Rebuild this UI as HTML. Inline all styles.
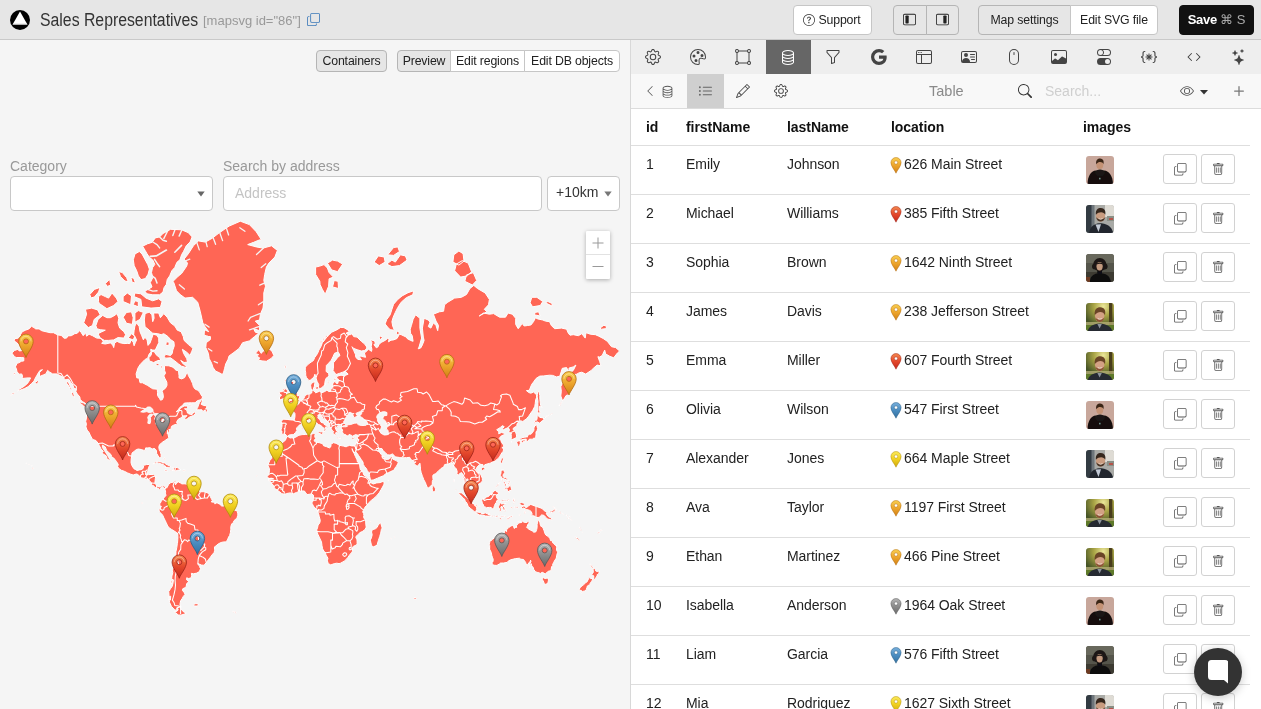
<!DOCTYPE html>
<html lang="en">
<head>
<meta charset="utf-8">
<title>Sales Representatives</title>
<style>
*{box-sizing:border-box;margin:0;padding:0}
html,body{width:1261px;height:709px;overflow:hidden;background:#fff}
body{font-family:"Liberation Sans",Arial,sans-serif;font-size:14px;color:#222;position:relative}
.abs{position:absolute}
#topbar{position:absolute;left:0;top:0;width:1261px;height:40px;background:#e6e6e6;border-bottom:1px solid #c9c9c9}
#title{position:absolute;left:40px;top:9.6px;font-size:18px;color:#333;white-space:nowrap;transform-origin:0 50%;transform:scaleX(0.878)}
#sc{position:absolute;left:203px;top:12.6px;font-size:13px;color:#999;white-space:nowrap}
.btn{position:absolute;border:1px solid #c6c6c6;background:#fff;border-radius:4px;font-size:12.3px;color:#222;text-align:center;white-space:nowrap;letter-spacing:-0.15px}
.btn.on{background:#e6e6e6;border-color:#b5b5b5}
#left{position:absolute;left:0;top:40px;width:631px;height:669px;background:#f5f5f5;border-right:1px solid #d8d8d8;overflow:hidden}
#right{position:absolute;left:631px;top:40px;width:630px;height:669px;background:#fff;overflow:hidden}
#tb1{position:absolute;left:0;top:0;width:630px;height:34px;background:#eeeeee}
#tb2{position:absolute;left:0;top:34px;width:630px;height:35px;background:#f8f8f8;border-bottom:1px solid #dcdcdc}
.ic{position:absolute;width:18px;height:18px}
.lbl{position:absolute;font-size:14px;color:#999;white-space:nowrap}
.inp{position:absolute;background:#fff;border:1px solid #c8c8c8;border-radius:4px;height:34px}
.row{position:absolute;left:0;width:619px;height:49px;border-top:1px solid #dedede;font-size:14px;color:#222;letter-spacing:-0.05px}
.row span{position:absolute;top:10px;white-space:nowrap}
.hd span{font-weight:bold;top:11px;color:#111}
.c1{left:15px}.c2{left:55px}.c3{left:156px}.c4{left:273px}
.pin{position:absolute;left:259px;top:11px;width:12px;height:17px}
.av{position:absolute;left:455px;top:10px;width:28px;height:28px;border-radius:3px;overflow:hidden}
.sq{position:absolute;top:8px;width:34px;height:30px;border:1px solid #d2d2d2;border-radius:3px;background:#fff}
.sq svg{position:absolute;left:10px;top:8px;width:12.5px;height:12.5px}
#topbar,#left,#right{will-change:transform}
</style>
</head>
<body>

<div id="topbar">
<svg class="abs" style="left:10px;top:9.8px;width:20px;height:20px" viewBox="0 0 20 20"><circle cx="10" cy="10" r="10" fill="#000"/><path d="M10 1.6 L17.4 14.5 L2.6 14.5 Z" fill="#fff"/><path d="M3.2 13.6 L16.8 13.6 L17.4 14.5 L2.6 14.5Z" fill="#ddd"/></svg>
<div id="title">Sales Representatives</div>
<div id="sc">[mapsvg id="86"]</div>
<svg class="abs" style="left:307px;top:13px;width:13px;height:13px;" viewBox="0 0 16 16" fill="#3a78b8"><path fill-rule="evenodd" d="M4 2a2 2 0 0 1 2-2h8a2 2 0 0 1 2 2v8a2 2 0 0 1-2 2H6a2 2 0 0 1-2-2zm2-1a1 1 0 0 0-1 1v8a1 1 0 0 0 1 1h8a1 1 0 0 0 1-1V2a1 1 0 0 0-1-1zM2 5a1 1 0 0 0-1 1v8a1 1 0 0 0 1 1h8a1 1 0 0 0 1-1v-1h1v1a2 2 0 0 1-2 2H2a2 2 0 0 1-2-2V6a2 2 0 0 1 2-2h1v1z"></path></svg>
<div class="btn" style="left:793px;top:5px;width:79px;height:30px;line-height:28px;padding-left:14px">Support</div>
<svg class="abs" style="left:803px;top:14px;width:12px;height:12px;" viewBox="0 0 16 16" fill="#333"><path d="M8 15A7 7 0 1 1 8 1a7 7 0 0 1 0 14m0 1A8 8 0 1 0 8 0a8 8 0 0 0 0 16"></path><path d="M5.255 5.786a.237.237 0 0 0 .241.247h.825c.138 0 .248-.113.266-.25.09-.656.54-1.134 1.342-1.134.686 0 1.314.343 1.314 1.168 0 .635-.374.927-.965 1.371-.673.489-1.206 1.06-1.168 1.987l.003.217a.25.25 0 0 0 .25.246h.811a.25.25 0 0 0 .25-.25v-.105c0-.718.273-.927 1.01-1.486.609-.463 1.244-.977 1.244-2.056 0-1.511-1.276-2.241-2.673-2.241-1.267 0-2.655.59-2.75 2.286m1.557 5.763c0 .533.425.927 1.01.927.609 0 1.028-.394 1.028-.927 0-.552-.42-.94-1.029-.94-.584 0-1.009.388-1.009.94"></path></svg>
<div class="btn on" style="left:893px;top:5px;width:34px;height:30px;border-radius:4px 0 0 4px"></div>
<div class="btn on" style="left:926px;top:5px;width:33px;height:30px;border-radius:0 4px 4px 0"></div>
<svg class="abs" style="left:902.5px;top:13px;width:13px;height:13px;" viewBox="0 0 16 16" fill="#222"><path d="M14 2a1 1 0 0 1 1 1v10a1 1 0 0 1-1 1H2a1 1 0 0 1-1-1V3a1 1 0 0 1 1-1zM2 1a2 2 0 0 0-2 2v10a2 2 0 0 0 2 2h12a2 2 0 0 0 2-2V3a2 2 0 0 0-2-2z"></path><path d="M3 4a1 1 0 0 1 1-1h2a1 1 0 0 1 1 1v8a1 1 0 0 1-1 1H4a1 1 0 0 1-1-1z"></path></svg>
<svg class="abs" style="left:936px;top:13px;width:13px;height:13px;" viewBox="0 0 16 16" fill="#222"><path d="M2 2a1 1 0 0 0-1 1v10a1 1 0 0 0 1 1h12a1 1 0 0 0 1-1V3a1 1 0 0 0-1-1zm12-1a2 2 0 0 1 2 2v10a2 2 0 0 1-2 2H2a2 2 0 0 1-2-2V3a2 2 0 0 1 2-2z"></path><path d="M13 4a1 1 0 0 0-1-1h-2a1 1 0 0 0-1 1v8a1 1 0 0 0 1 1h2a1 1 0 0 0 1-1z"></path></svg>
<div class="btn on" style="left:978px;top:5px;width:93px;height:30px;line-height:28px;border-radius:4px 0 0 4px">Map settings</div>
<div class="btn" style="left:1070px;top:5px;width:88px;height:30px;line-height:28px;border-radius:0 4px 4px 0">Edit SVG file</div>
<div class="btn" style="left:1179px;top:5px;width:75px;height:30px;line-height:28px;background:#111;border-color:#111;color:#fff;font-size:13px"><b style="font-weight:bold;letter-spacing:-0.3px">Save</b> <span style="color:#aaa">&#8984; S</span></div>
</div>
<div id="left">
<div class="btn on" style="left:316px;top:10px;width:71px;height:22px;line-height:20px">Containers</div>
<div class="btn on" style="left:397px;top:10px;width:54px;height:22px;line-height:20px;border-radius:4px 0 0 4px">Preview</div>
<div class="btn" style="left:450px;top:10px;width:75px;height:22px;line-height:20px;border-radius:0">Edit regions</div>
<div class="btn" style="left:524px;top:10px;width:96px;height:22px;line-height:20px;border-radius:0 4px 4px 0">Edit DB objects</div>
<div class="lbl" style="left:10px;top:118px">Category</div>
<div class="inp" style="left:10px;top:136px;width:203px;height:35px"></div>
<svg class="abs" style="left:197px;top:151px;width:8px;height:6px" viewBox="0 0 8 6"><path d="M0.3 0.5h7.4L4 5.6z" fill="#666"/></svg>
<div class="lbl" style="left:223px;top:118px">Search by address</div>
<div class="inp" style="left:223px;top:136px;width:319px;height:35px"><span style="position:absolute;left:11px;top:8px;font-size:14px;color:#c4c4c4">Address</span></div>
<div class="inp" style="left:547px;top:136px;width:73px;height:35px"><span style="position:absolute;left:8px;top:7px;font-size:14px;color:#333">+10km</span></div>
<svg class="abs" style="left:604px;top:151px;width:8px;height:6px" viewBox="0 0 8 6"><path d="M0.3 0.5h7.4L4 5.6z" fill="#777"/></svg>
<svg class="abs" id="map" style="left:0;top:0;width:630px;height:669px" viewBox="0 40 630 669">
<defs><linearGradient id="pgo" x1="0" y1="0" x2="0" y2="1"><stop offset="0" stop-color="#f9cf50"/><stop offset="0.5" stop-color="#eda52c"/><stop offset="1" stop-color="#d07f16"/></linearGradient><linearGradient id="pgr" x1="0" y1="0" x2="0" y2="1"><stop offset="0" stop-color="#f58a50"/><stop offset="0.5" stop-color="#e4482c"/><stop offset="1" stop-color="#c2281c"/></linearGradient><linearGradient id="pgb" x1="0" y1="0" x2="0" y2="1"><stop offset="0" stop-color="#78b0dc"/><stop offset="0.5" stop-color="#4a8cc0"/><stop offset="1" stop-color="#33719f"/></linearGradient><linearGradient id="pgy" x1="0" y1="0" x2="0" y2="1"><stop offset="0" stop-color="#fbea5a"/><stop offset="0.5" stop-color="#f0d020"/><stop offset="1" stop-color="#cfa80e"/></linearGradient><linearGradient id="pgg" x1="0" y1="0" x2="0" y2="1"><stop offset="0" stop-color="#b4b4b4"/><stop offset="0.5" stop-color="#8c8c8c"/><stop offset="1" stop-color="#6a6a6a"/></linearGradient></defs>
<path d="M11.8 353.0L14.5 350.5L17.9 349.3L19.3 351.0L22.3 350.5L23.0 348.8L21.1 347.6L19.3 346.7L18.6 344.5L16.2 342.2L14.0 341.1L15.0 338.5L17.9 338.3L20.1 336.2L20.5 334.5L22.3 331.7L25.5 330.2L28.9 328.9L31.5 326.3L34.0 327.6L35.7 328.9L39.1 328.9L41.7 330.7L45.0 331.5L50.1 332.7L53.5 332.7L57.8 334.9L61.2 335.4L64.2 338.3L66.6 338.1L67.9 335.9L71.3 335.7L74.7 333.7L77.3 333.2L79.8 330.5L81.0 332.2L83.2 335.7L84.9 333.7L85.6 332.5L86.6 336.2L89.1 334.2L92.5 335.7L96.8 338.1L101.0 338.3L103.2 341.3L101.7 343.4L105.3 344.0L110.3 342.9L112.7 344.9L113.7 347.6L114.6 343.1L117.1 341.3L119.7 342.7L123.9 343.6L127.3 343.4L129.8 343.6L130.7 340.9L131.9 340.4L133.2 342.2L134.1 345.8L135.3 342.7L136.6 339.9L134.9 336.6L133.6 335.2L134.1 330.7L134.9 326.0L136.6 322.8L139.2 326.6L140.0 331.7L141.5 335.2L143.4 339.9L144.8 337.1L147.1 339.9L148.0 345.4L150.0 343.1L151.7 338.5L153.1 334.2L156.8 335.2L158.7 338.1L158.8 342.7L157.0 346.3L155.3 350.1L152.7 350.1L150.7 349.3L151.0 351.8L149.0 354.3L147.7 358.2L145.1 359.4L143.2 361.3L140.0 364.7L137.8 368.3L137.0 371.1L136.1 373.9L136.8 377.9L139.0 378.0L140.0 382.7L142.6 382.8L147.7 385.5L152.7 388.8L157.3 389.2L157.5 392.6L157.5 395.5L159.5 398.5L160.5 400.2L162.4 399.6L163.4 396.9L162.9 393.2L161.9 390.9L165.5 388.2L167.0 385.2L166.8 382.1L164.8 378.2L163.8 375.9L165.5 373.2L164.6 370.4L164.4 365.6L168.9 365.8L172.2 366.9L174.8 368.7L175.6 370.1L178.5 370.8L179.0 375.6L179.0 377.9L181.6 378.9L184.6 377.6L186.2 374.2L187.5 372.5L188.4 375.6L190.9 379.8L192.6 383.6L193.4 386.7L195.1 389.1L197.7 390.3L199.7 392.0L200.6 394.0L202.3 396.6L202.4 398.3L200.2 399.9L197.3 400.7L195.1 402.8L191.7 402.8L188.4 402.8L184.3 403.1L182.4 405.5L179.9 407.3L178.2 409.8L176.1 411.8L178.2 411.1L180.7 408.1L184.1 406.0L187.3 406.0L188.0 407.0L186.7 408.8L184.5 408.8L186.7 410.1L187.0 411.3L187.5 413.1L188.7 413.8L190.1 414.3L192.1 414.5L194.3 411.3L195.5 413.8L193.4 415.5L189.2 417.2L187.5 418.6L185.5 419.8L184.6 418.1L187.0 415.7L185.3 415.7L183.3 416.0L180.7 417.9L178.2 419.3L177.0 421.2L176.5 422.4L177.2 423.5L178.2 423.2L178.2 423.9L176.1 424.4L173.9 425.0L171.4 426.4L171.2 428.2L169.9 430.0L169.0 429.0L169.5 431.0L168.5 433.2L168.0 434.0L167.5 430.4L167.3 433.6L168.0 434.4L168.9 437.9L167.2 439.0L164.8 440.7L162.6 442.1L161.2 443.3L159.5 444.7L158.8 447.1L159.2 449.5L160.3 451.6L161.1 454.6L161.1 456.5L160.4 457.7L159.4 457.7L158.2 456.0L156.6 453.3L156.5 450.6L154.9 448.7L153.9 448.4L152.1 449.1L150.2 447.7L147.7 447.9L145.6 447.9L145.4 450.2L143.4 450.2L141.2 449.5L138.3 449.0L136.3 449.6L134.1 451.4L132.0 453.1L131.7 456.2L131.2 459.0L131.0 462.7L132.0 465.8L133.9 468.7L135.8 469.7L137.0 470.5L139.5 469.9L141.2 469.7L143.1 468.5L143.6 465.8L144.3 465.2L146.8 464.5L149.3 464.5L149.7 465.2L148.5 467.6L148.0 470.3L147.3 471.7L146.5 474.5L148.5 474.6L151.0 474.5L153.6 474.6L155.8 476.1L155.3 478.7L155.1 480.7L154.9 483.1L156.1 484.8L157.5 486.4L159.5 486.9L161.4 485.9L162.9 485.6L164.8 486.5L165.7 487.1L164.8 489.6L164.1 487.9L162.9 486.7L162.1 486.6L160.7 487.7L160.7 489.3L159.5 489.4L158.3 488.2L156.3 488.1L155.1 487.4L153.2 485.5L152.4 485.3L151.4 484.3L151.6 482.9L149.7 481.0L148.3 479.6L146.3 479.3L144.3 478.4L141.7 477.9L140.5 477.0L137.8 474.5L136.3 474.0L133.2 475.0L130.7 474.2L127.5 472.9L124.4 471.3L121.4 470.3L118.8 468.5L117.6 466.5L118.3 464.5L116.4 461.4L113.7 458.0L111.4 456.7L111.2 454.8L108.8 452.5L106.6 450.4L105.3 446.9L102.4 445.1L102.4 447.5L104.4 450.4L105.6 452.4L107.5 455.2L108.6 457.1L109.8 459.5L111.2 461.2L110.5 461.9L109.8 460.6L106.9 458.8L106.6 456.2L104.4 454.6L103.2 453.9L101.9 452.7L103.4 451.4L101.0 448.9L99.3 445.5L98.3 443.5L95.9 440.5L92.5 439.4L90.2 435.1L89.1 432.5L87.1 430.1L85.9 426.8L86.4 423.9L85.7 421.4L86.6 417.2L86.6 413.1L85.4 407.8L88.3 408.6L89.3 410.3L89.1 407.5L88.6 406.3L88.0 405.5L85.7 403.6L82.4 401.5L80.2 399.6L79.8 396.9L77.3 394.0L75.9 391.7L76.4 389.1L73.9 388.2L73.0 385.2L70.5 382.1L68.8 379.2L66.2 379.5L65.2 379.8L62.9 377.2L60.0 375.6L56.9 373.9L52.7 373.9L49.8 372.2L47.6 370.4L45.9 373.9L43.3 374.9L39.4 376.6L39.6 372.2L42.5 369.7L40.0 370.4L38.3 372.9L36.6 375.9L35.4 377.9L34.0 381.1L31.5 383.6L28.1 386.7L24.7 388.5L22.1 389.5L19.6 390.3L17.4 390.9L19.9 388.8L23.0 387.0L25.5 385.2L28.1 382.7L29.8 379.5L30.6 377.9L28.1 377.9L25.0 378.2L22.1 378.5L22.5 375.6L21.6 373.9L19.6 374.2L17.1 372.2L16.4 368.7L15.4 366.9L17.1 363.2L18.8 362.8L21.3 361.3L23.8 360.9L23.8 357.8L21.3 357.5L16.4 357.5L14.5 356.7L11.8 353.0ZM186.7 368.0L184.1 366.9L181.6 366.2L178.3 363.8L174.8 360.9L170.5 357.8L165.5 358.2L164.3 356.7L165.5 354.3L170.5 355.5L172.2 353.4L172.8 350.1L174.3 345.8L173.9 341.8L170.5 339.5L168.0 336.6L163.8 333.7L161.2 334.7L157.8 333.7L152.7 333.2L150.2 331.2L147.7 328.7L145.1 327.1L144.3 320.0L145.1 313.6L149.3 312.1L151.9 314.8L152.7 321.7L154.1 318.3L153.6 313.0L158.7 313.0L160.4 317.7L163.8 313.6L167.2 317.2L170.5 322.8L174.8 326.0L177.3 330.2L181.1 331.7L183.3 336.6L184.1 340.4L188.4 344.5L191.7 347.1L192.9 348.8L191.7 351.4L190.1 355.5L186.7 352.2L182.4 349.3L183.6 353.4L186.7 358.6L187.5 362.1L184.1 362.5L180.7 360.4L183.3 364.0L185.8 365.8L186.7 368.0ZM118.0 337.6L113.7 339.9L108.6 340.4L104.4 340.4L100.2 338.1L98.0 333.7L101.9 331.7L105.3 330.2L100.2 329.7L96.8 328.7L95.9 325.5L98.0 319.4L102.7 315.4L106.9 317.7L110.3 317.7L113.7 316.0L117.1 313.6L118.8 318.3L118.0 322.8L119.7 328.1L123.9 331.7L125.6 334.7L123.9 338.1L118.0 337.6ZM83.7 322.8L88.3 327.6L92.5 325.5L94.2 319.4L100.2 314.8L97.6 309.9L91.7 308.1L85.4 309.3L86.6 314.2L83.7 322.8ZM126.5 323.3L132.4 324.4L133.2 317.7L131.5 311.8L126.5 312.4L123.1 317.2L126.5 323.3ZM134.9 322.2L140.0 319.4L143.4 312.4L138.3 310.6L134.9 313.0L134.9 322.2ZM128.1 338.1L133.2 339.9L134.9 336.2L131.5 333.7L128.1 338.1ZM149.3 360.9L153.6 362.5L157.8 360.6L160.9 360.2L159.5 357.5L156.1 354.7L154.4 351.8L151.9 351.4L151.0 355.5L148.8 357.5L149.3 360.9ZM165.8 345.4L168.9 345.4L169.2 342.2L166.3 341.8ZM155.8 364.7L157.8 365.8L159.5 364.0L157.0 363.2ZM160.7 368.3L162.2 368.0L162.1 365.4L160.9 365.8ZM140.9 299.4L141.7 306.8L151.0 308.1L160.4 307.4L162.1 301.5L158.7 298.8L152.7 300.8L146.0 298.1L140.9 293.8L134.9 293.0L134.1 296.6L140.9 299.4ZM133.2 304.8L138.3 306.8L138.3 301.5L134.9 300.8ZM123.1 301.5L130.7 304.8L131.5 295.9L127.3 293.0L123.1 296.6L123.1 301.5ZM99.3 303.5L106.9 308.7L113.7 305.5L118.0 301.5L116.3 298.1L112.0 293.0L108.6 298.1L105.3 296.6L101.0 294.5L98.5 296.6L98.5 301.5L99.3 303.5ZM196.3 409.8L197.7 407.5L198.5 405.0L199.7 402.3L201.9 399.3L202.8 399.6L201.9 402.3L201.1 404.2L203.6 405.5L206.2 405.7L207.0 407.0L205.7 408.8L207.4 409.3L207.5 410.1L206.8 412.2L205.3 411.8L205.3 409.8L202.8 411.6L201.9 409.8L199.4 409.8L196.3 409.8ZM187.8 412.1L190.1 412.7L191.7 412.7L190.7 413.8L188.7 413.2ZM187.5 403.9L191.7 405.2L192.1 406.0L189.2 405.5ZM79.3 401.8L84.1 403.1L87.1 406.8L87.6 407.9L85.2 407.5L83.2 405.5L80.2 403.4L79.3 401.8ZM71.3 392.0L73.5 392.6L74.6 397.7L72.2 395.5ZM34.7 382.7L37.4 380.8L38.8 381.7L36.6 383.9ZM13.2 373.2L15.7 372.9L15.7 374.4L13.7 374.6ZM10.4 395.2L13.7 394.0L14.9 392.6L12.8 392.9ZM66.6 381.1L68.4 382.1L71.0 388.2L72.5 389.7L70.5 389.7L68.8 386.1L66.9 383.6ZM222.4 374.6L219.7 372.9L215.5 371.1L212.9 367.2L211.6 363.2L209.2 358.6L208.4 353.4L205.8 347.6L206.2 342.7L210.4 339.5L210.4 336.6L207.0 336.6L204.1 334.7L204.5 329.7L208.7 331.7L204.5 326.0L202.8 322.8L201.8 318.3L200.2 311.2L197.7 302.2L192.6 297.3L185.0 298.1L180.2 294.5L176.5 290.8L173.9 282.9L173.1 281.3L178.2 276.2L181.6 273.5L186.7 266.1L187.5 263.1L184.1 259.1L188.4 253.7L193.4 245.8L198.5 240.9L205.3 242.1L212.1 238.3L218.9 233.1L229.1 226.1L240.3 221.2L249.4 224.6L256.2 231.7L261.3 239.6L254.5 242.1L247.7 244.6L256.2 246.9L263.0 248.1L271.5 245.8L277.4 250.4L274.9 257.0L268.9 263.1L266.4 267.1L264.7 274.4L263.8 280.5L265.5 286.2L263.8 293.0L263.8 301.5L263.0 308.1L260.4 314.2L259.6 320.0L255.3 321.1L259.6 325.5L259.6 330.7L253.7 328.7L255.3 332.2L258.7 333.2L254.5 336.6L249.4 340.9L242.6 342.7L239.2 348.4L233.1 353.0L229.1 355.9L228.0 359.4L225.7 364.0L224.5 368.7L223.6 372.2L222.4 374.6ZM255.3 353.4L258.7 349.7L261.3 353.4L263.0 351.0L266.4 350.5L269.8 349.3L272.1 351.4L273.8 355.5L271.5 358.2L266.4 361.3L262.1 360.9L258.4 360.2L259.6 357.8L256.2 355.9L258.7 354.7L255.3 353.4ZM165.7 487.1L166.6 488.2L168.0 485.8L168.9 484.1L170.0 483.0L171.1 482.6L173.1 482.2L175.3 480.6L176.3 481.3L175.0 482.6L175.5 484.8L176.5 483.4L177.8 482.2L178.2 481.0L178.7 482.2L181.1 483.1L181.6 483.9L185.0 483.8L187.5 484.5L190.1 483.6L191.9 483.6L191.2 484.8L193.4 485.7L193.8 487.2L195.5 487.7L197.7 489.4L198.4 490.3L200.2 491.8L203.3 491.7L205.3 492.0L207.2 492.7L208.2 493.5L209.4 494.7L210.4 496.8L211.4 498.8L212.3 500.3L211.4 502.0L214.6 502.2L215.0 504.1L215.5 503.0L217.2 502.9L219.7 504.2L221.8 506.1L224.0 505.9L226.5 506.8L229.1 506.7L231.6 508.1L233.8 510.0L237.0 510.7L237.2 511.7L237.9 513.9L237.7 515.6L237.0 517.7L236.4 518.4L235.0 519.9L234.1 520.6L233.3 522.4L231.6 524.1L230.8 526.7L230.8 529.3L230.4 532.5L229.6 535.6L228.6 537.0L227.4 540.1L225.7 541.9L223.6 541.9L221.1 542.5L218.4 543.8L215.8 546.0L214.6 546.8L214.5 549.4L214.6 550.6L214.1 552.5L212.1 554.8L210.4 557.2L208.5 559.5L206.3 562.7L204.5 564.5L203.7 565.2L201.6 565.1L198.9 564.0L197.9 563.2L197.9 564.5L199.7 565.9L199.9 567.8L200.7 568.2L199.4 571.6L196.8 573.1L193.4 573.8L191.4 573.3L191.6 575.5L191.2 577.8L188.7 578.5L186.7 577.8L186.7 580.0L189.0 581.6L187.8 582.5L186.7 583.5L186.2 586.3L185.5 587.5L182.8 588.7L182.4 590.4L184.1 592.4L185.1 594.3L183.3 596.4L182.1 598.7L180.7 600.6L179.9 604.4L180.9 606.4L179.0 606.8L176.8 607.7L176.7 610.5L174.8 609.7L173.1 608.2L171.4 606.3L169.7 602.7L168.9 598.7L169.0 594.9L168.7 591.6L170.5 588.7L172.2 586.3L173.1 582.8L173.4 579.8L171.7 579.3L171.9 576.0L172.8 572.7L172.2 569.9L172.9 568.8L173.8 565.9L175.5 561.2L175.6 557.2L175.8 555.0L176.0 551.3L176.8 547.5L177.3 543.8L177.5 543.1L177.8 539.2L177.9 536.8L177.7 533.7L176.0 532.2L173.9 530.8L171.4 529.3L169.4 528.1L167.7 526.0L166.1 522.4L165.1 520.3L163.9 518.0L162.9 515.6L161.4 513.6L159.4 512.0L159.0 509.8L160.4 507.8L161.4 506.3L159.7 505.8L159.9 503.5L161.1 501.9L161.2 500.5L163.1 499.5L163.3 498.8L164.3 497.4L166.1 495.2L165.5 493.9L165.6 492.3L165.5 490.5L164.8 489.6L165.7 487.1ZM180.6 607.3L181.2 609.1L183.3 611.7L186.3 613.0L184.1 614.2L180.7 615.2L178.2 614.9L175.6 612.8L173.9 611.1L176.5 611.7L178.2 609.9L177.5 608.0L179.2 607.1L180.6 607.3ZM171.1 583.5L172.2 583.5L172.4 580.5L171.4 580.0L171.1 581.6ZM169.2 600.1L170.4 600.1L170.7 596.2L169.2 596.4ZM193.4 604.6L196.0 603.5L198.9 604.4L197.2 606.0L194.3 606.0ZM152.8 463.9L154.4 462.9L155.8 461.8L157.1 461.5L158.6 461.7L161.2 461.9L162.9 462.9L164.6 463.0L166.1 464.3L168.0 465.1L169.9 466.0L171.1 466.8L169.5 467.4L168.3 467.3L165.1 467.5L166.1 466.6L165.0 466.0L163.8 465.4L163.2 464.3L161.2 464.0L160.5 463.5L158.7 463.2L157.5 462.9L157.3 462.3L155.6 463.2L153.9 463.8L152.8 463.9ZM172.4 467.6L174.4 467.7L175.4 467.4L177.0 467.6L179.5 468.5L178.9 468.8L181.0 469.7L180.0 470.1L178.3 470.0L176.3 470.5L175.8 471.5L175.2 470.8L173.9 470.5L171.8 470.5L170.6 470.2L171.2 469.6L174.2 469.8L173.6 468.8L173.6 468.2L172.4 467.6ZM164.0 470.3L164.8 469.9L166.5 470.1L167.7 470.8L166.5 471.1L165.1 471.1ZM182.9 469.9L185.6 470.2L185.3 470.8L182.9 470.9ZM191.9 483.6L193.6 483.4L193.4 484.6L191.9 484.7ZM163.9 457.9L165.0 458.0L165.3 459.9L164.3 459.5ZM141.7 502.4L142.7 502.4L142.7 503.5L141.7 503.5ZM286.9 436.7L287.9 436.5L290.1 438.0L291.9 437.8L293.5 438.2L295.9 437.0L297.2 436.3L298.9 435.3L302.1 434.6L305.4 434.5L308.8 434.1L310.1 434.4L313.5 433.6L315.6 434.1L314.7 435.7L315.0 437.4L315.7 438.4L315.2 439.0L314.0 440.7L315.7 442.1L319.3 442.7L322.7 443.7L323.5 445.7L326.6 446.7L329.5 447.9L331.0 446.5L330.9 444.3L333.4 442.7L336.1 443.3L337.6 444.3L339.6 445.3L343.5 446.1L346.1 446.8L347.6 446.1L349.5 445.4L351.7 445.9L354.9 445.9L356.2 449.5L355.0 452.8L353.2 451.2L352.1 448.6L352.4 450.4L353.9 453.1L354.3 453.9L355.4 456.5L357.1 459.9L357.3 461.8L359.5 463.6L360.0 467.9L360.5 469.9L362.4 470.8L363.9 475.1L365.2 476.1L366.8 477.0L369.4 479.6L370.3 480.5L370.1 482.0L369.5 482.2L370.7 482.6L373.2 484.0L376.6 482.9L380.0 482.6L383.1 481.4L383.9 481.6L384.1 484.0L383.1 486.0L381.4 489.1L379.2 492.8L376.6 495.9L373.8 498.4L371.5 500.2L369.1 502.4L367.3 504.7L366.3 505.8L364.9 507.3L364.2 508.7L363.4 510.3L362.7 512.0L363.6 513.4L363.9 515.5L363.6 517.0L364.4 518.9L365.6 519.8L365.8 524.1L366.1 526.7L366.0 527.6L364.9 529.7L362.2 531.6L359.7 532.7L358.3 534.5L356.1 536.2L355.8 537.6L356.8 539.2L357.1 541.0L357.1 543.6L356.6 544.9L353.7 546.2L352.2 547.4L352.7 549.1L352.2 551.9L351.3 552.9L349.6 554.9L348.1 557.2L346.4 559.2L344.2 561.2L340.5 563.2L339.0 563.6L336.8 563.2L334.4 563.6L330.8 564.9L329.1 564.0L328.2 563.9L328.1 563.0L327.4 560.8L327.9 558.2L326.2 555.2L324.9 552.5L323.2 550.0L322.6 548.7L322.0 545.7L321.5 541.9L319.6 537.9L318.1 534.7L316.8 531.6L316.9 529.3L317.5 527.9L318.1 525.0L319.6 523.3L320.3 520.6L319.3 516.8L318.6 513.8L317.8 512.2L317.6 511.3L317.0 510.0L315.6 508.5L313.4 506.1L312.5 504.2L311.7 503.0L312.9 501.2L313.2 500.0L313.4 498.7L313.5 497.1L313.4 495.1L312.0 494.2L311.3 493.9L309.1 494.3L307.1 494.6L305.7 492.8L304.5 491.1L302.7 490.9L301.0 491.1L298.9 491.5L296.6 492.4L293.3 493.8L291.5 493.2L290.1 492.9L286.7 493.5L284.2 494.5L281.6 493.4L278.6 491.1L277.4 490.1L275.0 488.9L274.3 487.4L273.7 485.7L272.0 483.8L271.3 483.1L270.4 481.5L268.6 480.7L268.7 478.8L268.4 477.9L267.2 476.6L268.9 474.4L269.4 470.8L269.4 468.5L268.0 465.8L268.2 464.3L269.8 460.5L271.6 458.6L272.3 456.0L274.2 454.1L275.0 452.4L278.1 450.8L279.6 449.6L280.5 447.7L280.1 447.2L280.4 445.5L281.2 443.9L284.0 441.3L285.3 440.4L286.2 438.4L286.9 436.7ZM380.5 522.4L382.2 528.1L381.4 529.3L380.7 533.2L379.7 536.5L378.3 540.7L377.0 545.3L373.5 546.8L371.5 545.7L370.9 542.6L370.3 540.1L371.4 537.9L372.2 534.7L371.5 532.0L372.3 529.7L375.4 528.8L377.1 527.4L378.1 525.3L379.7 523.2L380.5 522.4ZM287.8 436.1L287.4 436.3L286.2 435.3L285.0 433.8L283.5 434.2L281.6 434.2L282.0 431.2L280.8 430.4L281.8 427.3L282.1 425.2L281.8 423.0L281.1 421.2L282.7 420.0L283.5 419.2L287.1 419.4L290.5 419.9L293.7 420.1L294.3 419.8L294.9 417.2L295.0 414.8L294.9 413.4L293.3 411.6L292.7 410.6L291.1 409.6L289.4 409.3L288.8 407.8L290.3 407.0L292.0 406.8L293.5 407.2L294.4 407.2L293.8 404.6L294.9 405.2L296.4 405.5L297.1 405.0L298.8 403.8L299.6 402.0L300.0 401.1L301.0 400.8L301.8 400.3L303.0 399.6L303.9 398.3L304.7 396.6L305.0 395.6L306.1 394.9L307.4 394.3L308.8 394.3L310.6 393.8L311.7 392.9L312.0 391.7L311.5 390.0L311.0 388.2L310.6 385.2L311.5 383.3L314.9 381.3L314.7 383.6L314.4 386.1L313.5 388.8L313.0 390.3L314.2 391.5L315.7 391.5L315.4 392.8L317.4 392.2L320.0 390.9L321.2 392.9L324.4 391.7L326.6 390.4L328.8 390.9L328.6 391.6L330.7 391.3L330.7 389.8L332.7 387.6L332.5 385.2L333.2 382.7L335.2 381.3L336.2 383.3L337.8 383.5L338.3 380.8L338.5 379.3L336.8 378.5L336.6 376.6L338.9 375.7L341.0 375.2L344.4 375.7L348.1 374.2L345.6 371.5L342.7 372.2L339.3 373.4L335.9 374.6L334.6 372.5L333.0 370.4L333.4 368.3L333.4 362.8L335.6 360.2L337.6 357.5L340.0 355.5L338.5 352.4L337.8 352.2L334.6 353.2L333.0 356.7L331.3 360.2L328.6 363.2L326.4 365.4L326.1 371.5L328.6 373.2L329.0 376.2L326.1 378.2L325.1 381.1L324.7 384.7L324.0 386.1L323.4 386.2L321.2 388.1L319.6 388.7L318.9 387.9L318.4 386.5L318.8 384.7L317.1 381.4L315.9 377.6L314.9 374.2L313.9 377.2L310.5 380.0L308.9 380.5L306.4 377.4L305.7 375.2L305.7 372.5L305.2 370.1L305.4 367.2L307.2 365.1L310.0 362.8L313.4 360.6L314.7 357.5L315.9 355.9L317.6 353.4L318.9 350.1L321.3 345.8L322.3 342.7L324.0 340.9L326.6 337.1L329.1 334.7L331.7 332.2L337.1 329.7L340.7 327.4L343.9 327.6L346.1 328.9L349.6 331.2L346.1 333.2L347.8 334.5L350.3 334.7L352.0 333.7L353.7 336.6L357.1 337.1L361.3 341.3L364.7 344.0L366.8 347.1L366.4 348.8L364.7 350.5L361.3 351.0L357.1 349.7L353.7 348.4L352.0 346.7L353.7 350.5L355.4 354.3L355.9 357.5L358.0 359.4L361.5 359.8L358.8 355.9L361.3 356.3L365.6 357.3L364.4 353.0L367.3 350.5L368.6 349.3L371.5 351.4L371.9 349.3L371.2 346.3L371.9 342.7L370.3 339.7L374.6 340.9L375.4 343.6L373.9 344.5L376.3 347.8L377.8 347.1L379.2 344.0L381.7 342.2L385.1 340.4L387.6 338.5L389.2 338.3L388.5 341.8L391.0 340.2L393.6 339.9L397.0 338.5L399.5 334.0L401.2 334.7L406.3 337.1L407.1 338.5L410.5 340.4L413.1 341.3L412.2 335.7L410.5 333.2L410.2 329.2L411.4 325.5L413.1 319.4L415.6 314.8L419.9 318.3L419.9 328.1L421.6 338.1L419.0 347.1L418.2 348.8L420.7 348.0L422.4 344.9L424.1 340.4L423.3 337.1L422.4 328.1L424.1 318.3L428.3 320.0L430.0 322.2L428.3 326.6L430.9 328.1L433.4 322.8L436.0 325.5L437.7 330.7L438.5 325.5L436.0 321.1L433.4 314.2L439.4 311.8L443.6 311.2L444.5 304.8L447.8 302.2L454.6 298.1L461.4 297.3L466.5 294.5L469.9 288.5L473.8 285.4L477.5 288.5L485.2 293.0L489.4 299.4L488.5 304.8L484.3 309.3L486.9 311.8L479.2 316.0L483.5 313.0L489.4 314.2L493.6 313.6L499.6 317.2L505.5 317.2L508.1 313.0L512.3 314.2L515.7 318.3L515.7 324.4L518.2 328.7L520.8 325.5L522.0 323.3L524.2 326.0L527.6 325.5L530.9 325.0L533.5 321.7L535.5 317.7L537.7 318.9L542.8 320.0L545.4 321.1L549.6 321.7L551.3 325.5L554.7 328.7L561.5 328.1L566.6 329.2L568.3 333.2L570.0 335.2L573.3 334.7L578.4 335.7L581.8 333.7L585.2 338.1L585.7 334.7L586.2 332.7L590.3 334.2L595.4 334.7L598.8 336.2L603.2 338.5L607.3 341.3L611.5 346.7L615.7 347.6L619.6 351.0L617.4 353.0L613.7 357.8L609.8 356.3L605.6 353.9L604.7 350.1L602.2 355.5L599.6 357.1L597.9 356.7L599.6 361.3L601.0 365.8L597.1 365.1L593.7 368.0L591.2 370.4L585.7 374.1L581.8 372.2L578.9 372.9L576.7 374.2L574.2 374.6L573.3 378.9L572.3 381.1L572.5 386.1L571.8 390.4L568.3 394.9L566.1 395.5L562.7 401.2L560.8 396.0L561.3 391.2L560.8 386.7L562.8 382.1L565.7 379.5L567.4 376.6L570.0 372.9L573.3 370.4L575.9 365.1L573.3 366.9L569.1 368.0L568.8 371.8L566.6 367.6L562.3 368.3L559.8 376.2L556.4 376.9L552.7 375.4L549.6 375.2L543.7 375.9L539.8 376.1L536.0 378.5L533.5 382.1L531.8 384.2L531.3 385.3L529.3 390.3L526.4 390.6L528.9 392.6L530.9 393.2L533.5 392.0L536.7 394.9L536.5 397.7L535.7 399.6L535.2 403.6L534.8 406.3L532.6 410.6L531.8 411.6L528.7 416.2L526.7 418.6L522.8 421.5L520.6 420.7L518.6 422.5L517.0 423.7L516.9 425.9L514.0 427.7L513.3 428.2L513.1 429.5L514.7 431.0L515.9 432.9L516.4 434.9L516.6 436.2L515.9 438.1L514.0 438.8L511.4 439.8L511.2 438.8L511.4 436.5L511.1 434.6L511.6 433.3L509.7 432.7L508.7 431.9L509.4 430.6L509.2 428.8L507.9 427.9L505.5 428.6L503.1 430.1L502.5 428.8L504.2 426.6L502.1 425.7L500.1 427.7L496.7 429.7L498.6 431.7L498.7 432.5L498.7 433.8L501.6 432.5L504.8 433.4L504.7 434.4L501.1 436.1L499.2 438.4L499.6 439.0L500.9 440.5L501.9 442.9L503.6 445.1L503.6 446.7L501.9 447.7L503.8 448.7L503.1 451.4L502.1 452.5L499.9 456.2L498.6 458.2L497.2 459.2L495.0 461.2L491.9 462.3L490.6 463.0L489.4 463.4L486.9 464.1L484.8 464.7L484.3 466.7L483.3 466.7L483.0 464.7L481.9 464.6L480.4 464.3L478.0 466.0L476.5 468.1L476.3 469.6L477.7 471.7L479.6 473.5L480.6 474.2L481.8 477.0L482.3 478.2L482.4 480.5L482.1 481.5L480.2 483.3L478.5 484.2L477.9 485.3L475.5 487.0L474.6 487.2L474.8 485.1L474.1 484.1L472.4 483.8L471.6 482.2L470.7 481.2L469.9 480.5L468.7 480.2L468.0 480.2L467.3 478.7L466.5 479.3L466.4 480.5L466.2 481.7L465.1 483.9L465.5 486.2L466.7 487.6L467.5 489.6L468.7 490.1L470.2 491.3L471.8 492.8L472.3 495.4L472.4 497.4L473.6 499.3L473.3 499.6L472.4 499.6L470.2 498.1L468.7 496.8L467.5 494.7L467.0 492.7L467.0 491.5L466.5 490.6L465.5 489.3L464.6 488.2L463.6 488.6L463.5 486.5L464.1 484.9L464.1 480.7L463.3 477.9L462.8 475.8L462.4 473.5L461.6 472.6L460.1 473.3L458.5 474.8L456.7 474.4L457.2 472.1L457.0 470.8L456.2 468.5L455.5 468.3L454.5 466.9L452.9 464.7L452.6 463.0L451.2 462.3L450.9 462.7L448.7 464.0L446.7 464.1L444.5 464.7L443.9 466.8L442.4 467.6L440.9 468.6L438.2 471.3L436.5 472.7L436.5 473.5L434.6 474.1L432.9 475.2L432.8 477.2L433.1 479.4L432.3 481.5L432.3 484.3L430.9 486.0L429.5 486.9L428.4 488.1L427.3 487.4L426.2 484.9L425.4 482.6L423.8 479.8L422.6 476.5L422.1 475.2L421.2 472.6L420.4 469.1L420.4 466.5L420.2 465.2L419.9 463.2L419.4 464.0L417.3 466.0L416.2 465.6L414.9 464.2L413.8 463.1L416.1 461.9L414.5 462.0L412.6 460.5L411.4 460.1L410.4 458.4L409.7 457.3L406.5 457.7L404.6 457.6L402.6 457.9L401.6 457.9L399.7 457.5L394.9 456.8L393.6 454.8L392.4 453.9L390.0 455.1L387.6 454.8L386.1 453.5L383.1 450.5L381.9 448.5L379.8 448.5L378.3 449.7L379.0 451.4L381.1 454.3L382.0 455.3L382.0 457.1L383.1 458.5L383.1 457.1L383.7 455.9L384.3 457.5L384.4 458.8L386.1 459.5L389.2 459.1L390.7 457.6L391.9 456.5L392.6 455.5L392.5 457.9L393.1 459.3L396.3 460.6L398.3 462.7L396.3 466.5L394.8 467.9L394.9 469.2L392.9 470.6L390.5 471.6L388.7 472.6L387.0 473.3L385.4 474.0L383.4 475.8L380.2 477.0L377.5 478.2L373.2 480.0L370.7 480.2L370.3 479.1L369.7 476.5L369.5 474.5L369.1 472.8L367.3 470.8L366.6 468.8L364.7 466.7L363.3 464.5L363.0 462.1L361.4 459.7L358.7 455.7L357.4 453.6L356.3 452.2L355.6 452.4L356.3 449.5L356.1 449.5L354.9 445.9L355.3 445.5L355.8 444.4L356.3 442.9L357.1 440.7L357.6 439.5L357.5 437.4L357.8 436.3L358.2 435.1L357.1 435.1L355.6 434.6L352.6 436.2L351.2 435.2L349.0 434.5L348.6 435.7L347.1 435.9L346.3 435.1L344.9 434.5L343.4 434.2L343.0 432.9L341.5 431.4L342.9 431.1L342.4 430.1L342.2 429.3L341.1 428.8L341.3 427.7L342.4 426.4L341.1 426.2L340.8 425.8L338.3 425.6L337.1 426.2L338.3 427.4L337.4 427.7L336.4 427.3L335.7 426.4L335.2 427.7L335.9 429.3L336.4 430.1L337.8 430.8L338.6 432.2L337.7 432.8L336.9 432.2L335.9 432.3L336.8 433.4L335.6 433.0L336.1 434.6L336.2 435.4L335.1 434.8L335.1 435.5L334.4 434.2L333.7 434.6L333.4 433.8L333.0 432.8L333.7 431.5L332.7 431.4L332.1 430.0L331.2 428.8L330.8 428.0L329.9 426.7L329.9 424.8L329.5 423.5L328.6 422.3L327.6 421.7L324.7 419.8L322.7 418.3L322.2 416.4L321.4 415.5L320.4 416.6L320.0 416.0L320.2 414.6L319.1 414.6L317.8 415.2L318.1 416.4L317.8 417.6L318.3 418.5L319.8 419.5L321.0 422.2L324.4 423.5L323.9 424.1L325.6 425.3L327.3 426.3L328.3 427.4L328.0 428.2L327.4 427.6L326.1 426.7L325.1 427.5L324.9 428.4L326.1 429.7L325.1 430.4L324.2 432.2L323.4 431.9L323.9 430.6L324.2 429.9L324.1 429.0L323.4 427.6L322.3 427.3L321.9 426.3L321.1 425.8L320.0 425.0L318.3 424.5L317.7 423.8L316.9 423.0L315.7 422.3L314.7 421.0L314.4 419.6L313.5 418.3L312.0 417.6L311.3 417.9L310.1 419.1L309.3 419.3L308.2 420.3L306.9 420.7L306.0 420.2L305.0 420.1L303.2 420.0L302.2 420.7L302.1 421.6L302.5 422.5L300.6 424.6L299.0 425.3L298.3 426.2L296.9 427.7L296.4 428.9L297.2 430.5L296.1 431.3L295.7 432.8L295.2 432.9L293.2 434.8L292.7 434.5L291.0 434.8L289.4 434.9L287.8 436.1ZM287.2 403.5L288.1 403.8L290.7 403.1L292.7 402.3L294.7 401.6L297.3 401.6L298.5 401.2L299.2 400.6L299.4 399.9L298.1 399.6L299.1 398.4L299.9 396.9L299.1 395.6L297.2 395.7L297.5 394.9L297.1 393.8L296.7 392.3L295.9 391.2L294.9 390.7L294.5 389.7L293.5 387.3L292.7 386.7L291.5 386.7L292.5 385.8L293.4 383.2L293.8 382.1L293.5 381.4L291.3 381.4L289.8 382.1L290.5 380.9L291.6 379.0L291.8 378.4L291.1 378.4L288.4 378.5L287.9 380.5L287.1 381.7L287.2 382.7L287.1 383.6L286.4 384.6L287.6 385.5L287.4 386.7L287.1 388.8L287.7 387.6L288.6 387.0L289.0 388.4L288.3 390.0L288.7 390.7L289.4 390.3L291.0 390.0L290.8 391.2L291.5 392.3L292.0 392.3L291.7 393.2L291.7 394.3L290.5 394.6L289.1 394.3L288.8 396.0L289.9 395.7L290.0 396.3L289.9 397.1L288.9 398.0L287.9 398.5L288.3 399.2L289.8 399.5L290.2 399.3L291.5 399.8L292.3 399.5L291.8 400.2L291.1 400.4L289.9 400.4L289.3 401.0L289.2 401.5L288.5 402.2L287.6 403.1L287.2 403.5ZM284.3 388.5L286.5 389.1L287.4 390.7L287.7 391.5L286.4 392.6L286.6 394.5L286.7 395.5L286.1 397.7L285.0 397.8L283.0 398.8L280.3 399.8L279.2 398.0L280.1 396.7L281.6 395.0L279.6 394.3L279.6 392.6L279.9 391.7L282.3 391.7L283.0 390.9L282.8 389.2L284.3 388.5ZM284.0 383.6L285.0 383.6L286.4 379.5L286.2 378.9L284.9 380.5ZM285.5 382.1L286.6 381.6L287.2 383.0L286.2 383.3ZM291.1 376.9L292.5 376.6L292.2 377.7L291.3 377.6ZM294.2 371.5L295.4 371.5L295.0 374.2L294.4 373.9ZM284.3 365.8L286.0 365.8L285.7 368.7L284.7 368.0ZM315.6 387.6L316.9 386.7L318.3 386.4L318.3 387.9L317.6 389.7L315.9 389.1L315.6 387.6ZM313.5 388.2L315.2 388.2L315.0 389.5L313.9 389.4ZM315.6 390.0L317.6 390.0L317.1 390.9L315.6 390.6ZM327.6 382.7L328.8 380.6L329.3 381.1L328.6 383.0L327.8 383.8ZM324.7 385.9L325.6 382.7L325.9 382.7L325.1 385.9ZM333.9 378.9L334.6 378.5L336.4 378.7L335.7 379.8L334.2 380.6L334.2 379.5ZM334.4 377.4L335.7 377.1L335.9 377.9L334.9 378.2ZM318.8 343.1L320.6 341.3L322.7 340.4L323.4 338.1L324.4 336.6L324.0 339.5L321.5 342.0L319.3 343.6ZM325.4 337.1L327.3 335.2L327.8 336.2L326.2 337.8ZM324.9 293.8L322.3 289.3L320.1 284.6L319.8 281.3L315.6 274.4L315.6 267.1L319.8 266.1L324.0 264.6L327.4 268.0L329.1 272.6L333.4 277.1L329.1 278.8L328.6 286.2L326.1 292.3L324.9 293.8ZM327.4 263.1L332.5 260.1L337.6 261.1L342.7 264.1L337.6 271.7L331.7 269.9L327.4 263.1ZM332.5 286.9L338.5 288.5L338.1 281.3L334.2 280.5L332.5 286.9ZM394.4 330.2L390.2 329.7L387.6 327.1L385.1 323.9L386.8 319.4L390.2 314.8L391.9 309.3L393.6 304.2L397.8 299.4L402.1 295.9L408.0 292.7L413.8 290.8L412.7 294.8L406.3 297.7L401.2 302.2L397.8 307.4L395.3 312.4L393.2 317.2L391.9 321.7L392.7 326.0L394.4 330.2ZM378.8 338.1L380.9 335.7L382.2 337.6L380.9 339.5ZM396.1 333.2L397.8 330.7L399.5 333.2L397.8 334.7ZM374.1 262.1L378.3 255.9L384.2 257.0L385.1 262.1L379.2 265.6ZM386.8 264.1L391.9 260.1L395.3 262.1L400.4 254.8L405.4 255.9L407.1 260.1L399.5 265.6L391.9 266.6ZM387.6 254.8L393.6 247.5L397.8 246.9L399.5 251.5L393.6 255.4ZM454.6 270.8L460.6 277.1L467.3 275.8L471.6 271.7L468.2 263.1L462.3 260.6L456.3 264.1ZM464.8 281.3L472.4 285.0L476.7 280.5L473.3 272.6L466.5 274.9ZM452.9 262.1L458.9 265.1L464.0 261.1L463.1 253.7L458.9 251.0L453.8 254.8ZM530.1 302.8L532.6 306.8L540.3 305.5L542.8 301.5L536.9 297.3L531.8 297.3ZM545.4 302.8L552.1 306.1L552.1 303.5L547.9 301.5ZM534.3 314.8L540.3 316.0L538.6 311.8L535.2 312.4ZM600.0 328.1L603.9 325.2L606.9 326.6L605.6 328.7L601.3 329.2ZM537.7 391.7L538.9 391.5L539.8 395.5L539.9 399.6L540.6 405.5L542.3 407.2L539.4 406.3L539.1 410.1L540.3 412.3L540.1 413.8L539.1 412.3L537.8 414.0L537.6 411.3L537.9 407.5L537.9 403.6L538.0 401.2L537.2 396.9L537.4 394.3L537.7 391.7ZM537.6 415.0L539.8 417.4L543.3 417.9L544.2 420.1L541.8 421.0L539.9 423.3L537.1 421.8L536.0 422.4L535.0 422.1L535.5 423.8L534.5 424.6L534.2 422.8L534.9 420.1L536.5 420.3L537.1 418.7L537.2 415.2L537.6 415.0ZM535.9 424.4L536.8 424.6L537.0 426.6L537.6 428.5L536.9 431.4L536.0 431.7L536.0 434.2L535.8 437.0L534.1 438.6L533.7 438.1L532.4 439.2L531.3 439.2L529.3 439.2L529.1 439.9L527.1 441.6L526.0 440.1L526.4 439.2L526.0 439.1L524.0 439.3L521.5 439.8L518.9 440.6L519.8 439.7L520.9 438.6L522.0 437.5L524.5 437.3L526.2 436.9L527.6 437.0L527.5 436.3L528.7 434.2L529.8 433.2L529.6 434.6L531.4 433.8L532.7 432.2L534.0 430.1L533.8 427.9L534.3 427.3L534.9 424.9L535.6 425.8L535.9 424.4ZM520.8 441.8L522.5 443.0L523.4 441.5L524.5 442.0L525.2 440.4L524.2 439.8L522.5 440.3L522.0 440.8L520.8 441.8ZM519.0 440.6L520.3 441.2L520.2 442.0L520.3 443.4L519.8 444.7L519.7 445.8L518.5 446.5L517.9 446.0L517.7 444.5L517.4 443.9L517.0 443.3L516.4 441.8L517.3 441.5L518.1 441.2L519.0 440.6ZM543.7 419.1L545.0 417.6L546.2 416.7L544.5 418.6ZM546.2 416.2L549.3 415.0L548.9 415.7L547.1 416.7ZM550.5 414.8L552.1 413.3L552.3 413.8L551.0 415.0ZM558.9 405.5L561.5 401.8L562.0 402.0L560.1 405.5ZM510.9 441.9L512.1 441.4L512.2 441.7L511.1 442.1ZM503.0 457.5L503.6 458.8L503.1 460.0L502.5 462.2L501.9 463.8L500.8 462.5L500.5 461.6L501.3 459.3L501.9 458.3L502.8 457.7ZM481.3 468.7L482.6 467.4L484.0 467.1L485.2 467.9L484.3 469.4L482.6 470.5L481.3 469.9L481.3 468.7ZM432.9 485.1L434.7 487.3L435.5 488.8L435.7 490.1L434.4 491.5L433.6 491.8L432.9 491.6L432.3 490.1L432.2 488.2L432.4 486.5L432.6 485.3ZM501.4 469.9L503.2 470.2L504.1 469.9L504.3 472.1L504.7 472.6L503.1 474.8L503.1 476.3L504.2 477.5L505.4 477.6L507.0 478.3L507.4 479.6L507.4 480.4L506.0 479.6L504.8 479.3L503.4 478.0L502.2 478.5L501.4 478.0L502.0 476.9L501.2 477.1L500.8 476.4L500.2 475.2L500.1 473.8L500.9 474.3L500.9 473.3L501.1 471.6L501.4 469.9ZM503.9 490.1L503.8 488.9L505.3 487.8L506.0 487.2L506.9 488.1L507.5 487.8L508.3 487.4L509.1 486.5L509.7 485.1L510.8 486.2L511.2 487.9L511.6 489.4L510.9 491.1L510.0 489.9L509.6 491.5L509.4 492.3L509.2 491.5L507.5 491.3L507.2 489.9L507.5 489.6L506.2 489.3L506.3 488.6L505.2 489.3L503.9 490.1ZM501.1 478.7L502.5 478.9L503.0 480.3L502.5 481.0L501.8 480.1ZM495.7 487.6L498.4 485.0L500.1 482.4L499.2 482.6L497.7 484.6L495.7 486.7ZM503.6 481.5L505.7 482.1L504.8 483.9L503.7 484.0L503.8 482.7ZM504.5 484.8L505.8 483.2L506.4 483.9L506.0 486.0L505.5 486.4L504.5 485.5ZM506.2 485.7L506.7 483.9L507.3 482.6L507.4 483.3L506.7 485.5ZM507.7 480.4L509.5 480.4L510.2 482.9L509.2 482.9L508.7 481.7ZM507.7 482.2L508.9 482.5L509.2 484.3L508.5 484.6L507.9 483.3ZM506.9 485.0L508.1 484.6L508.2 485.3L507.2 485.5ZM482.9 498.3L484.1 499.0L485.8 497.8L485.5 497.3L488.6 496.4L490.2 494.4L491.9 493.4L492.3 492.8L493.7 491.7L494.9 490.0L495.8 490.6L496.5 491.7L497.2 491.9L499.1 493.0L498.0 494.2L496.9 494.6L496.3 496.3L496.8 497.9L498.6 500.1L496.9 500.5L496.2 502.7L495.1 504.0L494.5 505.8L494.0 506.9L493.8 508.6L491.3 508.9L491.3 507.5L489.4 507.4L486.9 507.6L486.5 507.8L485.2 506.9L483.8 506.8L483.5 505.0L482.3 503.2L482.1 501.9L481.7 500.3L482.3 499.3L482.9 498.3ZM458.5 492.4L461.7 493.0L463.1 494.2L464.3 495.4L466.2 496.8L467.9 498.3L469.0 499.0L470.4 500.2L471.6 500.7L472.9 501.9L472.4 503.4L474.0 503.6L474.3 505.2L475.0 505.8L476.7 506.9L476.7 509.5L476.4 511.8L475.5 511.2L474.3 511.7L473.1 510.5L470.3 508.3L468.2 506.4L467.1 503.5L466.0 501.9L465.4 501.5L464.4 498.9L462.7 497.9L461.7 496.3L459.9 494.8L459.0 494.0L458.5 492.4ZM476.7 511.9L478.1 512.2L480.7 512.5L481.1 513.3L482.0 513.5L484.1 513.7L485.1 512.7L485.8 513.2L486.9 513.6L488.1 514.1L488.9 515.0L490.2 514.9L490.9 515.8L491.1 516.7L489.4 516.1L487.7 516.1L485.3 515.9L484.0 515.5L481.8 514.9L481.2 514.9L479.2 514.9L477.6 513.8L475.4 513.4L476.3 512.6L476.7 511.9ZM488.0 513.8L490.1 513.6L490.4 513.8L489.4 514.1L488.0 514.0ZM475.3 504.7L476.7 504.6L477.9 506.3L477.5 507.1L476.3 505.6ZM479.4 506.3L480.4 506.4L480.4 507.3L479.6 507.3ZM461.6 499.5L462.3 499.5L462.9 500.8L462.6 500.9ZM464.1 503.5L464.8 503.5L465.3 504.7L464.8 504.9ZM491.1 515.7L492.3 515.5L493.1 516.1L492.3 516.8L491.3 516.1ZM493.5 516.1L494.3 515.8L494.8 516.3L494.3 517.1L493.5 516.8ZM495.0 516.1L496.2 516.1L497.0 515.6L497.5 516.1L499.1 516.1L498.9 516.7L497.5 516.7L496.5 517.0L495.0 517.0ZM500.1 516.1L501.8 516.0L503.8 516.2L505.5 515.9L505.2 516.5L503.0 517.0L501.3 516.8L500.1 516.8ZM498.7 518.0L500.3 517.7L501.8 518.9L500.9 519.4L499.1 518.6ZM506.4 519.4L507.2 517.9L508.9 516.7L511.4 516.1L512.8 516.1L512.0 517.0L509.7 518.0L508.1 519.2L506.4 519.4ZM508.6 499.3L509.2 499.1L509.2 499.5L508.1 501.1L505.6 501.0L503.0 501.0L500.8 501.3L500.5 502.9L501.7 504.2L503.1 503.4L506.0 503.5L505.2 504.6L503.3 505.2L503.0 506.4L504.2 506.9L504.8 508.6L505.3 509.3L504.5 510.0L503.1 510.1L503.0 508.7L501.9 506.3L500.8 506.9L501.1 508.6L501.1 509.6L501.2 511.4L499.6 511.3L499.4 510.6L499.7 508.6L498.6 507.9L498.6 506.4L499.2 505.1L499.6 503.5L500.0 503.0L500.2 501.7L501.8 500.1L501.9 499.6L502.8 499.9L504.7 500.2L505.3 500.2L507.2 500.3L508.6 499.3ZM504.8 509.5L505.8 509.1L505.8 510.9L504.8 511.4ZM513.1 498.6L514.0 498.1L513.8 499.6L515.2 499.3L515.2 500.2L514.0 500.7L515.3 501.3L514.5 502.0L513.8 501.3L514.5 503.4L513.8 503.2L513.3 501.3L513.1 500.2L513.1 498.6ZM513.8 507.3L515.5 506.7L517.2 506.8L518.7 507.6L517.4 508.0L515.5 507.6L514.0 507.8ZM510.6 507.3L511.8 507.0L512.6 507.5L512.1 508.3L510.8 508.0ZM524.3 511.0L525.5 511.4L525.4 513.6L524.3 513.2ZM519.1 514.6L520.3 514.1L520.1 515.5L519.2 515.5ZM519.5 503.3L521.6 502.5L524.3 503.3L524.3 504.4L524.5 506.1L525.5 507.4L526.7 507.5L528.9 505.6L530.8 504.4L532.2 505.0L535.5 506.2L536.5 506.4L538.3 507.2L540.5 507.9L542.0 508.4L544.2 510.7L545.4 511.4L547.7 513.1L546.2 513.3L547.2 515.1L548.4 516.5L548.8 517.0L550.1 517.2L551.1 518.4L552.8 519.3L552.4 519.9L550.5 519.5L547.9 519.2L546.5 518.0L545.4 517.0L544.1 515.4L541.6 514.9L540.4 516.0L539.8 517.2L538.1 517.5L536.0 517.3L535.0 516.3L532.6 515.6L530.4 516.1L532.3 514.1L532.0 513.6L531.1 511.4L529.3 510.2L526.2 509.4L523.7 508.0L522.3 508.8L521.3 506.9L523.3 506.1L524.0 505.8L522.0 505.6L520.7 504.7L519.0 504.1L519.5 503.3ZM548.5 511.5L550.5 511.3L552.0 511.1L553.3 510.3L554.2 509.0L555.0 509.0L555.2 510.2L554.7 511.2L552.7 512.4L550.6 512.6L548.6 511.7ZM552.7 506.3L553.8 506.8L555.5 508.3L556.6 509.8L556.0 509.8L554.7 508.0L552.8 506.6ZM559.1 511.0L560.3 511.7L561.3 513.4L560.5 513.4L559.3 511.9ZM562.3 513.2L564.0 514.3L563.7 514.4L562.3 513.6ZM565.9 514.8L567.9 516.1L567.6 516.3L565.7 515.1ZM567.6 517.7L569.6 518.4L569.1 518.7L567.6 518.2ZM569.3 516.0L570.5 517.5L570.0 517.9L569.3 516.5ZM570.5 519.4L572.2 520.1L571.7 520.3L570.5 519.8ZM579.5 527.1L580.5 527.6L580.1 528.6L579.5 528.3ZM580.5 529.2L581.5 529.9L581.0 530.4L580.5 529.7ZM582.2 532.2L582.8 532.4L582.5 532.7L582.0 532.5ZM575.0 536.7L577.6 538.1L580.1 540.5L579.3 540.7L576.7 539.0L575.0 537.2ZM597.6 532.2L599.8 532.0L600.0 533.1L597.8 533.2ZM600.0 530.2L602.2 529.7L602.0 530.6L600.1 530.9ZM538.6 520.1L539.8 522.2L540.4 525.3L541.0 526.5L542.0 526.2L543.2 528.4L544.2 530.9L544.7 532.9L545.9 535.1L548.3 536.5L549.9 538.6L550.6 540.7L552.5 540.8L552.7 542.9L553.5 543.5L555.4 545.2L556.2 546.1L556.7 545.1L556.6 547.4L556.6 550.2L557.3 551.6L557.5 552.6L556.6 555.8L556.3 558.1L554.4 561.0L553.5 562.9L552.8 564.0L552.7 565.5L551.6 566.7L551.1 569.6L551.3 570.5L547.9 571.4L545.2 574.1L543.8 573.0L542.2 572.3L540.3 573.5L538.6 572.5L537.1 572.4L535.4 571.6L533.9 569.8L533.2 567.4L532.5 566.4L531.1 566.5L531.8 565.1L531.1 563.6L530.4 565.6L529.1 565.9L530.1 563.2L530.9 561.6L530.6 560.2L530.2 561.3L529.1 562.6L527.4 564.8L527.6 565.2L526.2 564.3L525.7 562.5L524.5 560.8L523.6 559.5L520.8 559.2L519.4 558.2L515.5 558.6L510.6 559.8L508.1 561.2L507.0 562.4L503.6 563.0L500.4 563.1L499.4 564.0L496.9 565.4L494.7 565.3L493.6 565.0L492.2 563.9L491.9 562.3L493.0 561.8L493.2 559.2L492.4 557.2L491.9 555.8L491.3 552.8L490.5 550.8L488.8 547.8L489.7 548.7L489.7 545.5L489.2 544.2L489.8 542.2L490.5 539.7L490.8 541.0L492.1 539.5L494.8 537.7L498.0 537.0L500.4 536.3L503.0 534.7L504.2 532.9L505.3 530.1L506.6 531.6L506.5 529.7L507.9 528.5L508.7 527.6L510.4 526.4L512.2 525.4L513.6 526.4L514.2 528.4L515.7 527.4L516.7 527.4L516.4 525.8L517.7 524.1L518.8 523.1L519.9 522.7L521.8 522.5L521.1 520.9L520.4 521.1L521.8 520.6L523.1 521.7L524.5 522.4L525.9 522.5L527.2 522.3L528.8 520.6L528.9 522.7L529.3 523.0L527.6 524.6L527.4 526.2L526.5 527.1L527.4 528.1L528.9 529.2L530.4 530.1L532.3 530.9L533.7 532.2L535.8 531.9L536.7 529.5L537.1 527.6L537.1 524.6L537.5 523.5L537.6 522.2L537.9 520.6L538.6 520.1ZM542.3 577.5L543.3 577.7L545.1 578.5L546.9 578.2L548.4 578.2L548.4 580.9L547.9 582.5L547.9 583.2L545.9 584.3L544.6 584.1L544.3 583.5L543.2 580.9L542.3 579.3L542.3 577.5ZM528.6 566.8L530.3 566.5L531.1 567.1L530.1 567.5L528.6 567.4ZM517.5 521.5L519.9 521.3L519.9 522.0L518.1 522.2ZM528.2 525.5L529.1 525.3L529.1 526.4L528.2 526.2ZM589.8 564.0L590.4 564.0L591.2 565.3L592.3 565.7L592.9 567.1L593.4 569.2L594.4 568.4L595.2 569.1L595.7 570.9L597.1 571.5L599.7 571.0L598.8 573.1L598.6 574.2L596.9 574.9L597.3 575.2L596.4 576.9L595.7 578.0L594.1 579.6L593.4 578.9L593.7 577.9L593.8 575.9L592.5 575.1L591.6 574.4L592.1 573.9L593.0 572.9L593.4 571.8L593.4 571.2L592.9 569.6L592.3 568.2L591.0 566.3L590.5 565.3L589.8 564.0ZM589.8 577.1L590.8 578.8L592.5 578.2L592.5 579.9L591.5 581.4L590.5 582.8L589.9 583.9L590.5 584.6L589.1 584.9L587.3 586.1L586.9 587.7L586.2 589.7L584.9 591.0L582.4 591.4L581.3 590.4L579.5 590.3L579.3 589.2L580.1 587.5L581.6 586.5L582.8 585.1L583.5 584.8L585.6 582.8L586.8 582.1L587.3 581.5L587.9 579.9L588.8 578.8L588.8 577.8L589.8 577.1ZM581.0 591.9L582.2 592.1L581.8 593.1L581.0 592.9ZM318.0 432.5L318.1 432.1L319.5 431.8L320.6 432.0L323.4 431.5L322.5 433.2L322.8 434.1L322.5 435.0L321.1 434.1L320.0 433.7L318.3 432.8ZM310.8 425.6L312.5 424.9L313.2 425.7L313.5 426.6L313.4 427.8L313.2 429.6L312.3 429.5L311.6 430.1L311.1 429.9L311.3 428.0L311.0 426.5ZM312.8 420.9L312.9 421.6L313.1 423.0L312.7 424.1L312.4 424.6L311.7 423.5L311.7 422.0L312.7 421.6ZM336.8 437.4L337.8 437.2L339.5 437.7L341.5 437.8L341.4 438.4L338.9 438.6L336.9 437.9ZM351.7 438.3L352.7 437.6L355.6 437.0L354.5 438.2L354.6 438.5L354.0 438.6L352.9 439.3L351.9 438.9ZM301.0 428.6L302.2 427.8L302.8 428.3L302.2 429.3L301.3 429.0ZM303.3 427.6L304.2 427.7L304.0 428.0L303.4 427.9ZM298.9 429.9L299.6 429.7L299.4 430.2L299.0 430.2ZM335.9 429.9L336.9 430.4L338.1 431.7L338.6 432.1L337.9 431.9L336.8 431.0ZM343.9 435.9L344.8 435.4L344.6 436.2L344.0 436.5ZM340.8 429.3L342.0 429.2L341.8 429.9L341.0 429.7ZM340.8 430.8L341.3 430.9L341.2 431.7L340.8 431.5ZM387.3 480.3L389.3 480.4L389.2 480.7L387.6 480.8ZM363.4 511.5L363.9 511.9L363.9 512.7L363.6 512.6ZM390.5 538.1L391.5 538.3L391.4 539.0L390.7 538.8ZM394.1 536.7L394.9 536.8L394.8 537.4L394.2 537.3ZM370.2 521.3L370.7 521.5L370.7 522.2L370.2 522.2ZM268.2 451.8L269.4 451.3L269.1 452.3L268.4 452.4ZM270.1 452.2L270.8 452.1L270.8 452.8L270.1 452.7ZM272.3 452.2L273.3 451.0L273.5 451.8L272.8 452.3ZM256.5 475.6L257.2 475.6L257.0 476.3L256.5 476.2ZM32.2 467.8L34.0 468.1L33.0 469.2L32.3 468.7ZM31.1 465.6L32.3 465.8L31.6 466.1ZM28.4 464.5L29.4 464.5L28.9 465.0ZM25.9 463.2L26.7 463.2L26.4 463.8ZM413.6 597.4L416.5 597.7L416.0 599.3L413.9 599.0ZM232.5 611.1L235.8 612.0L236.2 613.4L233.3 612.0ZM382.5 455.8L382.8 455.8L382.7 456.4L382.5 456.3ZM454.1 478.7L454.6 479.1L454.3 482.0L453.8 481.9ZM455.8 489.6L456.2 489.8L456.1 490.3L455.7 490.1ZM142.6 246.2L147.7 243.7L152.0 242.4L155.3 237.9L159.6 236.9L163.0 233.5L170.6 229.3L181.6 229.8L188.4 232.7L192.1 236.9L190.1 242.0L186.3 245.7L183.6 251.3L181.6 254.7L179.9 259.8L176.9 262.3L174.8 267.4L171.8 270.8L169.7 275.9L167.2 279.6L166.4 284.3L164.0 287.7L163.0 292.0L159.6 294.8L152.8 294.8L146.9 293.8L144.8 291.1L148.1 289.4L152.0 286.9L150.3 282.6L152.8 277.6L151.5 272.5L152.5 267.7L154.8 264.4L152.8 260.0L149.4 257.3L147.1 253.9L145.2 250.5ZM135.0 253.9L139.3 251.5L142.0 253.9L144.7 258.9L147.7 264.4L149.4 269.1L148.1 274.2L145.4 278.6L141.0 279.6L138.4 275.9L136.7 270.8L134.2 265.7L133.3 259.8ZM118.6 271.6L122.3 272.5L126.6 277.6L128.3 281.8L124.9 281.0L120.6 276.7ZM130.8 277.2L133.8 278.4L135.5 283.0L132.2 282.3ZM105.4 283.5L109.6 279.3L110.8 285.2L107.1 286.4ZM89.8 294.5L94.4 289.4L100.0 287.4L98.6 292.0L94.4 297.0L91.0 297.9Z" fill="#ff6655" stroke="#fff" stroke-width="1.0" stroke-linejoin="round"/>
<path d="M140.7 411.8L143.4 410.1L146.0 408.8L147.3 407.0L150.2 407.0L152.7 409.1L153.2 411.6L151.9 412.1L149.3 412.6L146.8 411.6L143.4 412.3L140.7 411.8ZM147.8 423.2L150.0 423.7L150.7 420.9L150.4 417.4L152.2 415.5L152.7 414.3L151.0 414.0L149.3 414.8L147.7 417.2L148.3 419.8L147.8 423.2ZM153.2 414.0L155.3 413.5L158.7 413.8L161.2 416.2L160.4 417.4L158.7 416.7L158.3 420.0L157.0 420.9L156.6 418.6L155.3 419.1L154.6 419.3L155.6 416.2L153.2 414.0ZM155.5 423.7L157.8 424.4L161.2 423.0L163.1 421.4L162.1 421.2L159.5 421.6L157.0 423.0L155.5 423.7ZM161.6 420.2L164.6 420.2L167.5 419.5L167.3 418.1L165.5 418.6L162.4 419.3ZM346.3 425.0L350.8 424.5L354.1 423.3L356.5 423.1L358.5 424.8L361.2 425.5L364.2 425.5L365.6 425.4L367.5 424.0L367.5 422.9L366.4 420.9L364.2 419.5L363.1 418.3L361.0 416.9L360.2 416.4L359.1 415.8L360.3 415.4L361.6 413.7L361.9 412.1L362.9 410.8L363.6 411.1L360.6 411.2L359.3 411.9L356.9 412.9L355.9 413.4L356.8 415.2L358.8 415.4L358.6 416.1L356.9 416.1L356.3 416.6L354.8 417.4L354.1 417.6L353.7 417.2L353.5 415.7L352.0 415.4L353.9 413.5L352.7 413.5L350.3 412.6L350.4 412.3L349.1 412.6L348.6 413.5L347.3 415.7L345.5 418.1L345.2 420.0L344.3 420.5L343.5 422.1L344.4 423.5L346.3 425.0ZM342.2 426.7L343.5 426.8L344.4 426.8L346.1 426.8L347.6 426.0L346.1 425.6L344.4 425.5L343.2 425.9ZM377.5 414.8L380.0 412.8L382.5 411.8L385.1 411.8L387.0 412.6L386.8 415.5L383.9 415.7L383.4 417.4L382.0 417.6L383.7 419.4L385.9 421.4L386.3 423.9L386.6 425.3L389.3 423.7L389.7 425.5L387.6 426.4L386.8 427.7L386.4 429.0L388.1 430.4L388.3 433.4L388.5 434.4L386.2 434.9L384.1 435.0L380.8 433.2L379.8 431.1L379.8 430.5L380.7 429.2L381.5 426.9L382.4 426.9L381.2 426.4L380.0 424.1L378.8 423.1L377.5 420.9L377.6 419.1L376.6 417.2L377.3 415.2L377.5 414.8Z" fill="#f5f5f5" stroke="#fff" stroke-width="0.9" stroke-linejoin="round"/>
<path d="M150.3 256.4L156.2 255.9L161.3 253.0L166.4 250.1" fill="none" stroke="#f5f5f5" stroke-width="1.7" stroke-linecap="round" stroke-linejoin="round"/><path d="M154.5 259.3L157.0 263.2L159.6 266.6" fill="none" stroke="#f5f5f5" stroke-width="1.5" stroke-linecap="round" stroke-linejoin="round"/><path d="M152.0 275.9L155.3 278.4L157.0 283.0" fill="none" stroke="#f5f5f5" stroke-width="1.5" stroke-linecap="round" stroke-linejoin="round"/><path d="M181.6 245.4L177.4 249.6L174.8 252.2" fill="none" stroke="#f5f5f5" stroke-width="1.5" stroke-linecap="round" stroke-linejoin="round"/><path d="M168.0 230.2L165.5 235.2L163.8 238.6" fill="none" stroke="#f5f5f5" stroke-width="1.4" stroke-linecap="round" stroke-linejoin="round"/><path d="M174.8 230.2L172.8 235.6" fill="none" stroke="#f5f5f5" stroke-width="1.4" stroke-linecap="round" stroke-linejoin="round"/><path d="M181.6 230.5L179.1 236.1" fill="none" stroke="#f5f5f5" stroke-width="1.4" stroke-linecap="round" stroke-linejoin="round"/><path d="M159.6 236.9L163.0 240.3L166.4 241.2" fill="none" stroke="#f5f5f5" stroke-width="1.4" stroke-linecap="round" stroke-linejoin="round"/><path d="M152.8 242.0L157.0 244.6L159.6 247.9" fill="none" stroke="#f5f5f5" stroke-width="1.4" stroke-linecap="round" stroke-linejoin="round"/><path d="M147.7 289.4L152.8 291.1L157.0 290.8" fill="none" stroke="#f5f5f5" stroke-width="1.4" stroke-linecap="round" stroke-linejoin="round"/><path d="M196.0 240.1L199.3 249.9" fill="none" stroke="#f5f5f5" stroke-width="1.3" stroke-linecap="round" stroke-linejoin="round"/><path d="M204.9 237.8L207.2 246.6" fill="none" stroke="#f5f5f5" stroke-width="1.3" stroke-linecap="round" stroke-linejoin="round"/><path d="M212.3 235.5L215.6 244.3" fill="none" stroke="#f5f5f5" stroke-width="1.3" stroke-linecap="round" stroke-linejoin="round"/><path d="M219.3 231.3L222.6 240.6" fill="none" stroke="#f5f5f5" stroke-width="1.3" stroke-linecap="round" stroke-linejoin="round"/><path d="M226.5 228.5L228.6 235.0" fill="none" stroke="#f5f5f5" stroke-width="1.3" stroke-linecap="round" stroke-linejoin="round"/><path d="M239.8 227.8L244.9 231.3" fill="none" stroke="#f5f5f5" stroke-width="1.3" stroke-linecap="round" stroke-linejoin="round"/><path d="M250.2 244.1L259.5 240.1" fill="none" stroke="#f5f5f5" stroke-width="1.3" stroke-linecap="round" stroke-linejoin="round"/><path d="M263.5 248.0L256.5 254.5" fill="none" stroke="#f5f5f5" stroke-width="1.3" stroke-linecap="round" stroke-linejoin="round"/><path d="M265.8 263.8L261.2 267.6" fill="none" stroke="#f5f5f5" stroke-width="1.3" stroke-linecap="round" stroke-linejoin="round"/><path d="M264.9 282.9L259.8 285.2" fill="none" stroke="#f5f5f5" stroke-width="1.3" stroke-linecap="round" stroke-linejoin="round"/><path d="M263.5 301.5L258.4 304.8" fill="none" stroke="#f5f5f5" stroke-width="1.3" stroke-linecap="round" stroke-linejoin="round"/><path d="M259.8 313.6L250.5 317.3L248.1 321.0" fill="none" stroke="#f5f5f5" stroke-width="1.3" stroke-linecap="round" stroke-linejoin="round"/><path d="M258.8 326.6L249.5 329.9" fill="none" stroke="#f5f5f5" stroke-width="1.3" stroke-linecap="round" stroke-linejoin="round"/><path d="M184.0 261.5L189.8 259.2" fill="none" stroke="#f5f5f5" stroke-width="1.3" stroke-linecap="round" stroke-linejoin="round"/><path d="M179.3 284.8L184.4 289.0" fill="none" stroke="#f5f5f5" stroke-width="1.3" stroke-linecap="round" stroke-linejoin="round"/><path d="M204.9 324.3L209.1 327.1" fill="none" stroke="#f5f5f5" stroke-width="1.3" stroke-linecap="round" stroke-linejoin="round"/><path d="M206.7 335.9L210.0 338.3" fill="none" stroke="#f5f5f5" stroke-width="1.3" stroke-linecap="round" stroke-linejoin="round"/><path d="M208.4 348.7L211.9 351.0" fill="none" stroke="#f5f5f5" stroke-width="1.3" stroke-linecap="round" stroke-linejoin="round"/><path d="M214.2 361.5L217.4 362.9" fill="none" stroke="#f5f5f5" stroke-width="1.3" stroke-linecap="round" stroke-linejoin="round"/>
<path d="M57.8 334.9L57.8 372.9L61.0 373.5L63.7 377.6L67.1 374.9L69.6 377.6L70.7 379.2L73.0 383.6L76.4 386.7L76.3 389.1M88.0 406.3L135.5 406.3L135.5 405.2L136.5 407.0L140.9 408.1L144.3 408.6L146.0 408.8M153.8 412.6L153.4 412.8M157.1 420.9L157.0 421.8L156.0 422.8L156.0 423.3M162.9 421.2L162.8 420.3M167.5 418.1L169.2 416.7L170.2 416.2L175.6 416.2L176.8 415.5L177.7 413.3L179.5 410.2L181.1 410.5L181.9 411.1L181.9 414.5L182.6 415.7L183.3 416.0M98.3 443.5L102.4 443.1L108.6 445.9L113.4 445.9L113.4 444.9L116.3 444.9L118.8 447.3L119.7 449.3L121.9 450.4L123.1 448.9L124.9 448.9L126.5 451.2L128.1 453.3L128.8 455.4L132.1 456.3M140.5 477.0L140.5 475.8L141.4 474.2L143.4 474.2L141.9 472.1L142.6 472.1L142.6 471.2L145.7 471.2L147.1 469.9M145.7 471.2L145.6 474.5L146.1 474.5M147.1 474.9L145.6 477.2L144.1 478.3M145.4 477.2L148.0 478.9M148.8 479.6L149.9 478.2L152.7 476.8L155.8 476.1M151.6 482.9L154.9 483.3M156.3 488.1L156.8 485.5M175.2 470.8L175.3 467.8M176.0 481.7L173.9 482.9L173.1 486.0L174.1 487.6L174.8 489.9L178.0 489.9L179.2 491.5L182.4 491.3L181.9 494.2L182.8 496.1L181.9 497.1L183.4 499.8M183.4 499.8L183.1 499.0L178.5 499.0L178.5 500.0L179.5 500.2L179.7 500.8L178.2 500.9L178.1 502.2L179.2 503.5L178.3 509.0M178.3 509.0L177.0 508.3L173.3 505.9L172.1 504.1L169.2 502.0L167.5 501.2L165.6 501.2L163.3 499.5M169.2 502.0L168.7 504.6L167.0 506.3L164.3 507.6L163.8 509.7L162.1 510.3L160.5 509.3L160.7 507.6M178.3 509.0L173.3 510.7L171.6 514.3L173.3 517.9L177.2 518.0L177.3 520.6L178.9 520.5M178.9 520.5L180.4 523.2L179.9 527.2L179.2 528.6L180.0 530.1L178.9 531.6L179.0 532.0L177.5 533.5M179.0 532.0L180.7 535.4L180.2 537.2L181.2 539.4L181.7 541.6L182.9 541.6L184.5 539.7L186.3 540.3L187.8 541.6L188.5 540.1L190.6 540.6L192.1 537.0L196.7 535.2L198.3 536.1L198.2 536.8M178.9 520.5L181.6 520.1L186.0 518.4L186.2 521.5L187.7 523.2L190.4 524.1L194.3 525.5L195.0 529.7L197.9 529.9L198.0 531.6L199.4 533.2L198.3 536.1M198.2 536.8L198.8 540.3L202.4 540.7L202.9 543.8L204.8 543.9L204.3 546.8M190.6 540.6L193.4 543.4L197.5 545.7L199.2 546.2L197.5 549.8L201.2 550.2L204.3 546.8L205.8 547.9L205.7 549.7L202.3 551.9L199.2 555.6L201.9 556.8L202.6 556.9L205.3 559.0L206.3 562.7M199.2 555.6L198.2 559.2L197.9 563.2M182.9 541.6L180.9 544.7L180.7 549.4L178.7 552.3L178.2 557.2L177.7 561.2L178.5 563.8L177.3 567.4L176.3 571.6L175.3 576.0L175.1 580.5L175.5 585.1L175.0 589.9L173.9 594.9L172.4 600.1L174.1 602.7L174.8 605.4L179.0 605.9L180.9 606.4M180.6 607.3L180.6 613.7M183.4 499.8L185.8 500.5L188.4 498.6L187.8 494.9L190.4 495.1L193.4 494.2L194.0 493.0L192.8 491.8L193.3 490.5L194.6 489.9L195.5 487.7M194.0 493.0L195.1 493.4L195.8 495.2L195.3 497.9L197.2 499.6L201.1 498.6L204.3 497.9L207.2 498.1L209.4 494.7M200.2 491.8L199.7 493.4L198.5 495.1L201.1 498.6M205.3 492.0L204.6 495.1L204.3 497.9M293.5 438.2L294.0 441.1L294.9 443.9L292.0 444.5L290.8 446.5L287.9 448.7L282.2 451.0L282.2 453.7L288.7 458.0L298.9 465.2L298.9 466.0L302.3 467.6L302.5 469.0L304.1 468.8L306.7 468.2L309.5 465.7L317.3 460.8L313.7 455.2L313.0 448.1L311.0 443.5L309.6 440.9L310.8 439.0L311.1 434.4M282.2 453.0L274.5 453.0M282.2 453.7L282.2 456.2L276.5 456.2L276.5 460.9L274.9 461.8L274.7 464.8L268.1 464.8M288.7 458.0L286.0 458.1L286.8 466.1L287.6 473.8L287.9 474.0L287.5 475.2L280.7 475.3L279.8 475.5L278.8 475.9L277.7 475.4L276.8 476.5L276.3 476.8L274.9 475.2L273.2 473.8L272.1 473.3L270.4 473.6L268.9 474.4M276.3 476.8L277.4 480.7L273.7 480.3L268.6 480.7M268.4 478.6L271.5 478.2L273.5 478.7L271.5 479.3L268.4 479.4M273.7 480.3L273.7 481.9L272.0 482.2L271.5 483.3M277.4 480.7L279.6 481.5L281.3 480.7L282.8 482.6L283.3 484.5L283.0 487.4L282.8 488.9L281.0 489.3L281.1 487.4L279.4 487.4L278.9 486.0L277.9 484.8L275.7 485.0L274.3 486.5M279.4 487.4L278.9 488.2L277.4 490.1M282.8 488.9L282.5 490.8L284.3 492.0L284.1 494.5M283.3 484.5L286.4 483.6L287.6 484.1L288.9 485.3L292.2 485.3L292.3 485.7L292.7 487.9L291.5 490.3L292.2 493.2M292.3 485.7L292.0 483.1L296.7 482.9L297.6 484.3L297.7 486.9L298.1 489.3L298.9 491.5M296.7 482.9L298.4 483.1L299.6 486.5L299.6 491.1M298.4 483.1L301.0 481.3L303.0 481.9L303.2 484.8L301.5 487.4L301.5 491.0M287.6 484.1L287.9 481.7L289.4 480.5L291.0 479.1L293.5 477.5L295.7 475.9L297.2 476.1L298.6 478.9L300.6 480.7L301.0 481.3M297.2 476.1L302.8 475.4L304.1 472.8L304.1 468.8M303.0 481.9L303.9 478.7L307.9 478.6L310.1 479.1L313.9 479.1L318.1 479.4L320.0 478.4L319.8 477.2L323.2 472.8L323.2 467.4L324.0 466.6L322.5 464.9L322.3 461.8M317.3 460.8L321.0 462.5L322.3 461.8L324.0 460.9L337.6 468.1L337.6 467.2L339.3 467.2L339.3 463.6L339.3 450.0L338.8 448.3L339.6 445.2M313.0 448.1L314.4 445.1L316.4 443.7L316.5 442.2M339.3 463.6L359.5 463.6M337.6 468.1L337.6 474.9L335.7 475.2L335.2 477.9L334.4 480.1L335.7 483.1L333.7 483.8L331.5 486.4L329.0 486.9L326.7 488.4L323.2 489.1M335.7 483.1L336.9 486.5L337.9 487.0L339.8 489.4L343.4 493.2M337.9 487.0L339.3 484.3L344.2 485.5L346.1 485.3L347.8 484.3L350.0 485.1L351.9 481.9L353.2 481.0L353.0 483.6L354.6 485.7M354.6 485.7L355.1 483.8L356.3 481.7L358.1 480.1L358.7 477.3L359.7 472.6L362.4 470.8M358.7 477.3L361.2 476.3L363.0 476.8L366.1 477.7L368.8 480.5L367.8 483.1L369.8 483.1L370.3 482.2M368.8 480.5L370.0 480.1M369.8 483.1L369.7 484.8L371.5 486.5L376.6 488.2L378.3 488.2L373.2 493.4L369.8 494.0L368.0 495.1L366.4 497.1L366.4 503.4L367.4 504.6M368.0 495.1L364.7 494.7L363.9 495.9L361.5 495.7L358.0 494.3L357.9 494.0L354.6 494.7L355.4 496.4L356.3 498.6L355.4 500.2L354.4 501.7M354.6 485.7L352.9 488.2L354.2 487.6L354.7 489.6L356.8 492.7L357.9 494.0M354.4 503.5L360.8 507.1L360.8 507.8L363.4 509.8M354.6 494.7L351.5 495.7L349.8 495.4L349.2 495.9L350.0 498.1L348.1 499.8L347.1 502.7L347.1 504.2L346.4 504.7L346.1 506.4L346.4 507.4L346.8 509.4M348.6 503.5L354.4 503.5M347.1 504.2L348.6 503.6L349.1 505.8L348.6 505.9L349.1 507.4L347.8 509.3L346.8 509.4M346.1 506.4L348.6 505.9M349.1 515.8L352.7 517.9L354.6 518.0M356.1 521.6L360.5 521.8L362.2 521.1L365.5 519.8M343.4 493.2L340.1 492.8L338.3 493.2L335.7 493.7L334.9 494.9L331.8 494.4L329.8 493.2L328.4 494.4L328.4 495.9L327.6 497.9L327.1 501.3L324.4 505.6L323.9 508.5L321.3 510.1L319.6 510.0L319.1 509.7L318.6 509.3L317.3 510.3M343.4 493.2L345.1 494.6L346.9 494.0L349.2 495.9M317.8 512.0L318.9 511.9L325.1 511.9L325.6 514.1L329.8 513.8L330.0 515.3L333.9 514.3L334.0 518.4L334.7 521.0L337.6 520.4L337.6 524.1L334.2 524.1L334.2 529.7L336.6 532.2M317.6 511.3L319.1 509.7M337.6 520.4L338.3 521.1L339.8 521.0L340.0 521.8L342.5 522.2L345.1 523.2L346.1 524.8L347.4 524.8L347.4 522.6L346.1 523.0L345.1 522.0L345.4 519.8L345.1 517.7L345.9 516.3L349.1 515.8M316.8 531.6L320.5 531.8L328.1 531.8L333.2 532.9L336.6 532.2L339.7 532.5M332.5 533.4L332.5 540.1L330.8 540.1L330.8 545.3L330.8 552.1L326.4 552.7L324.9 552.5M332.5 533.4L336.6 532.9L338.3 532.9L339.7 532.5M330.8 545.3L332.2 549.1L335.2 547.7L335.9 546.2L340.3 546.8L342.5 544.4L342.7 543.1L346.8 540.5L350.0 540.8M346.8 540.5L343.9 537.4L341.3 535.0L339.7 532.5L342.7 532.7L345.9 529.2L348.5 528.6L348.1 527.2L353.2 525.8L352.4 525.1L352.9 523.2L353.4 520.6L352.7 517.9M353.2 525.8L355.2 526.5L355.6 528.1L355.1 529.3L356.8 531.3L357.8 529.3L357.6 526.9L356.1 525.0L356.1 521.6M348.5 528.6L350.0 529.3L352.7 530.6L352.9 532.0L352.4 534.7L352.9 536.1L352.0 538.8L350.0 540.8L351.2 544.7L351.1 547.4L351.2 549.1L352.7 549.2M349.5 547.5L351.0 547.5L351.3 549.1L350.0 550.0L349.1 548.9L349.5 547.5M342.7 554.4L344.4 552.7L346.1 553.1L346.8 554.2L345.9 555.8L344.4 556.4L343.2 555.6L342.7 554.4M311.3 493.9L312.5 490.8L314.2 490.1L316.1 490.8L316.9 489.8L318.6 486.9L320.3 483.1L321.7 481.0L320.8 479.4M320.8 479.4L322.3 482.2L322.5 484.8L320.6 485.5L323.2 489.1L321.3 491.7L321.7 493.4L322.3 495.4L324.2 498.1L324.9 496.4L328.4 495.9M324.2 498.1L324.0 499.0L319.5 498.1L316.1 498.1L313.5 497.9M316.1 498.1L316.1 500.2L313.5 500.2M319.5 498.1L319.5 499.6L321.2 499.6L321.3 502.7L320.5 505.9L318.6 505.1L318.1 505.9L316.6 506.1L317.1 507.8L315.7 508.6M281.9 423.5L283.0 423.0L285.7 423.3L286.4 424.1L285.2 425.5L285.2 427.1L285.0 428.4L284.2 428.5L285.0 429.9L284.5 431.2L285.0 431.7L284.2 433.2L284.3 433.8M293.8 420.1L294.5 420.8L295.7 421.2L298.1 421.4L299.4 421.8L300.3 422.3L302.2 422.2M309.7 419.1L310.0 418.1L308.6 417.6L308.8 415.7L308.5 414.2L308.9 413.9L308.4 413.4L307.4 413.1L307.1 413.4L307.2 412.3L308.8 410.5L309.8 409.8L309.8 408.6L310.8 406.3L307.8 405.1L306.7 404.8L305.1 403.2L303.9 403.6L304.0 402.8L302.3 401.6L301.2 400.7M302.7 400.0L304.2 399.9L305.4 399.8L306.8 400.6L306.6 401.5L307.1 401.6L307.6 402.8L307.3 403.2L306.7 404.8M307.3 403.2L307.9 404.2L307.8 405.1M307.1 401.6L307.1 398.8L308.4 398.3L308.9 397.4L309.1 394.9M311.6 390.0L312.9 390.3M321.1 392.9L321.3 394.9L320.9 396.0L321.8 398.0L321.9 399.6L322.3 401.0L322.0 401.4L321.2 401.0L317.4 402.8L318.1 403.9L320.3 406.8L318.9 408.1L318.9 410.1L317.6 409.8L315.6 410.3L314.7 409.9L313.2 409.9L311.5 409.6L309.8 409.8M308.9 413.9L310.3 413.9L311.2 412.8L312.2 414.2L312.7 412.7L314.0 413.2L314.6 411.7L313.1 411.1L313.2 409.9M314.6 411.7L315.9 411.4L317.6 411.2L317.9 412.1L320.1 412.6L319.8 413.8L320.2 414.6M320.1 412.6L321.7 412.7L324.2 411.7L324.9 410.3L325.9 409.6L326.0 408.8L325.6 407.3L324.2 406.9L322.3 406.3L322.0 406.8L320.4 406.9M322.0 401.4L323.7 401.8L324.5 401.9L325.6 403.1L326.9 402.8L328.8 405.0L327.4 406.3L325.6 407.3M328.8 405.0L330.5 405.7L331.7 405.2L335.1 406.0L334.5 407.8L333.4 407.5L330.8 408.3L328.8 409.3L326.0 408.8M335.1 406.0L335.4 404.7L337.6 402.0L336.9 399.6L336.9 398.0L336.2 397.4L337.4 396.3L336.8 392.8L335.6 391.6L330.5 391.3M335.6 391.6L335.6 390.0L334.2 389.5L332.9 389.0M332.6 386.5L334.2 385.5L337.6 385.8L339.3 386.1L342.0 387.6L341.8 389.1L340.7 390.0L340.3 392.0L338.3 392.9L336.8 392.8M342.0 387.6L344.6 386.2L343.9 382.7L343.3 381.9L341.0 380.9L339.8 380.5L338.2 380.8M343.3 381.9L343.5 379.5L343.5 377.2L344.6 375.9M344.6 386.2L348.1 387.2L349.5 389.7L349.1 390.6L350.8 393.2L352.4 394.3L350.2 394.9L350.8 398.0L348.6 400.2L346.6 399.9L343.0 399.1L339.3 398.5L336.9 399.6M350.8 398.0L354.2 397.3L355.2 399.1L357.3 402.6L360.5 402.8L361.7 403.9L364.9 404.7L364.4 406.8L364.4 409.1L361.9 409.9L361.7 411.1M334.5 407.8L335.7 408.8L339.1 409.6L342.0 408.2L344.7 408.3L346.4 409.1L347.9 412.8L346.0 413.8L344.7 415.1L347.2 415.5M342.0 408.2L344.6 411.8L344.7 415.1M335.7 408.8L332.9 412.8L331.2 413.5L328.9 414.0L326.7 413.9L324.9 412.6L324.2 411.7M331.2 413.5L333.2 415.7L333.2 416.7L335.1 416.9L335.3 418.1L335.9 419.1L340.1 419.4L342.7 418.2L345.3 419.2M335.3 418.1L334.9 420.9L334.9 422.5L335.8 424.7L338.5 424.2L341.2 424.7L341.6 423.9L343.5 423.2L344.4 423.2M341.6 423.9L342.0 424.8L341.1 426.2M335.8 424.7L332.5 425.8L330.8 428.4M332.5 425.8L331.7 424.8L331.8 423.6L330.8 422.0L329.8 423.6M331.8 423.6L333.5 422.7L334.9 422.5M320.0 415.1L322.8 415.1L323.4 413.3L324.9 412.6M323.6 415.7L324.5 416.2L327.2 416.1L329.1 416.6L329.8 417.9L329.5 419.8L328.3 420.9L328.2 422.0M323.6 415.7L323.9 416.9L324.4 418.1L326.7 420.9L328.2 422.0M328.9 414.0L329.3 415.5L329.1 416.6M329.5 419.8L331.3 421.4L330.8 422.0M331.3 421.4L331.8 420.5L333.2 421.3L333.5 422.7M316.4 377.2L316.9 374.9L318.1 373.2L317.8 370.4L317.6 368.0L317.4 363.2L319.3 359.0L321.2 355.1L321.7 351.0L323.2 350.1L324.7 344.9L327.3 342.7L331.2 340.4L331.8 337.8L333.5 336.6L337.1 339.2L340.5 338.3L341.0 334.7L344.2 333.0L346.6 336.6L345.9 337.8M331.8 337.8L337.1 343.1L336.8 346.3L337.6 348.0L337.9 352.2M349.1 334.2L345.9 337.8L345.2 341.8L347.8 344.0L346.3 347.6L347.9 352.6L347.3 356.3L348.7 359.0L350.5 363.6L347.4 369.4L344.0 372.0M284.5 389.5L283.5 390.6L284.2 392.2L285.7 392.5L286.2 392.3M364.7 420.0L368.8 420.5L371.4 421.8L374.2 422.1L375.6 423.5L376.2 423.6L377.1 424.8L379.3 423.6M367.4 424.4L369.1 424.1L370.6 425.3L373.2 424.9L375.6 423.5M370.6 425.3L371.0 427.3L372.9 428.4L371.5 429.0L372.0 431.2L372.9 433.8M373.2 424.9L374.2 426.8L375.8 428.8L375.8 430.1L378.3 428.4L379.8 431.1M372.9 428.4L375.8 430.1M358.0 436.5L359.1 435.8L359.0 434.6L361.3 434.6L364.7 434.6L368.7 434.0L372.9 433.8M368.7 434.0L366.8 438.8L362.7 441.7L359.3 443.9L357.4 443.1M357.9 439.1L358.8 439.7L358.0 441.5L357.6 441.9L356.4 442.3M357.6 441.9L357.2 443.7L357.0 445.5L356.3 449.4M356.3 449.6L358.1 450.0L360.5 448.5L361.3 447.5L359.7 445.5L363.0 444.3L363.4 444.2L362.7 441.7M363.4 444.2L365.4 444.7L368.3 446.3L372.7 450.0L375.8 450.2L377.4 450.4L377.8 451.3L379.0 451.3M375.8 450.2L376.6 448.6L378.2 448.5M372.9 433.8L373.9 436.3L375.1 438.0L373.9 440.5L375.1 442.5L378.1 444.9L377.8 446.5L379.2 448.6M369.5 473.6L370.2 471.9L372.4 471.9L375.6 472.2L377.5 472.6L378.6 470.5L380.2 469.7L385.1 469.0L390.2 467.2L391.3 463.6L390.5 462.3L386.0 461.8L384.4 459.7M385.1 469.0L387.0 473.2M390.5 462.3L391.5 459.9L391.9 458.2L392.5 458.1M383.1 458.5L384.1 458.8M388.3 433.5L392.2 431.9L394.1 431.7L395.9 432.9L397.5 433.2L399.3 435.1L400.7 435.1L400.8 437.2L399.7 439.9L399.6 442.3L400.2 445.5L401.7 446.5L400.1 448.8L401.9 451.4L403.4 451.9L403.4 453.9L404.3 455.0L401.6 457.9M400.1 448.8L402.9 449.6L405.8 449.5L409.3 448.7L409.5 446.7L411.7 445.9L414.4 444.7L414.8 442.3L416.1 441.9L415.5 440.5L417.5 439.7L418.3 438.0L417.7 436.1L419.9 434.6L422.4 434.5L423.9 433.8M400.8 437.2L403.7 437.6L406.3 435.7L408.2 433.6L409.7 433.5L411.9 433.9L414.8 432.9L416.0 432.3L418.2 431.4L418.3 434.9L421.2 433.3L423.9 433.8M412.6 460.5L415.6 459.5L417.3 459.2L415.6 456.7L416.0 455.0L414.8 454.3L416.3 452.4L418.8 452.4L420.7 450.0L422.2 447.7L423.4 446.3L423.1 445.1L424.6 443.9L422.6 442.1L422.1 439.9L425.5 439.4L428.8 437.4M423.9 433.8L425.6 436.3L428.8 437.4L430.7 439.9L430.5 441.5L431.2 443.5L430.4 445.5L434.4 448.1M434.4 448.1L432.7 450.8L438.2 453.6L440.6 453.9L441.6 454.8L446.3 455.4M434.4 448.1L436.5 448.3L439.2 449.8L442.4 452.0L446.3 452.5L446.3 455.4M446.3 452.5L447.7 453.7L449.0 452.0L452.4 452.7L455.3 451.0L458.7 450.4L460.1 449.6L461.9 451.9M447.7 453.7L447.8 454.6L452.9 454.5L452.4 452.7M461.9 451.9L461.4 454.1L458.4 456.2L457.3 458.6L455.1 459.9L455.3 461.8L453.9 464.9L453.4 466.0M446.3 455.4L446.8 457.7L447.7 459.3L447.3 461.8L448.0 463.4L447.8 464.1M446.3 455.4L447.8 455.4L449.2 457.5L453.6 458.0L452.9 459.3L451.6 460.1L452.1 461.8L453.4 461.9L453.9 464.9M461.9 451.9L464.3 453.1L464.3 456.3L462.4 458.4L462.8 460.1L464.6 461.4L465.1 463.4L466.7 464.5L468.5 464.4L466.7 466.6M466.7 466.6L463.1 467.8L462.6 469.9L464.6 473.6L463.4 475.8L465.1 478.4L465.0 482.2L464.1 484.8M468.5 464.4L470.1 462.9L473.1 462.5L475.5 461.2L477.9 462.5L480.1 464.4M470.1 462.9L471.6 465.4L474.8 466.9L473.3 468.3L475.3 469.6L477.5 472.6L479.2 474.5L479.4 476.6L479.2 479.6L479.2 480.8L476.7 481.9L476.3 483.1L474.0 484.1M466.7 466.6L467.3 467.9L468.7 468.1L468.2 471.3L470.1 470.5L472.3 470.1L474.5 471.9L474.6 473.6L476.0 475.2L475.8 477.1L476.7 477.9L479.4 476.6M475.8 477.1L471.6 477.4L470.5 478.6L471.4 481.9M466.8 490.9L468.4 492.3L470.1 491.2M482.9 498.3L484.3 500.4L486.9 499.5L490.1 499.5L491.6 498.5L493.0 496.1L493.5 494.5L496.3 494.8M490.4 494.0L491.6 494.7L492.4 493.5M507.2 517.9L509.1 517.5L508.8 517.0M536.0 506.3L536.0 517.3M445.8 405.9L449.5 409.1L451.2 412.3L451.1 415.7L455.5 416.3L458.7 417.9L460.4 421.5L466.5 421.7L469.6 422.1L474.8 424.0L479.2 422.2L482.3 422.2L486.7 419.2L485.2 417.9L486.7 416.1L489.6 416.8L493.6 414.5L497.9 411.8L500.3 412.1L499.9 410.8L496.7 409.7L493.5 409.6L494.8 404.0M445.8 405.9L449.0 403.9L453.8 401.6L456.8 402.2L461.9 404.3L463.6 402.3L464.6 398.0L470.2 400.0L472.8 403.2L477.9 402.8L480.9 405.3L484.8 405.7L488.5 404.7L490.8 403.0L494.8 404.0M494.8 404.0L496.7 405.0L499.1 403.4L500.6 399.1L501.6 396.6L500.4 396.0L502.1 394.6L506.5 393.9L509.9 395.3L513.1 403.1L513.3 404.2L517.4 406.5L518.6 409.6L521.6 409.6L525.4 407.8L522.6 416.0L519.2 416.4L519.6 419.8L518.4 422.3M518.4 422.3L517.2 420.9L514.0 423.2L512.1 423.7L507.9 427.7M510.8 432.6L514.6 430.8M445.8 405.9L445.0 406.0L442.4 407.8L442.2 410.8L437.7 410.8L436.5 415.0L432.4 416.4L433.4 420.2L432.9 423.0L430.0 425.0L427.3 425.5L424.1 426.7L422.1 428.0L421.9 428.9L422.2 431.0L423.9 431.2L423.9 433.8M445.0 406.0L443.1 405.0L441.4 404.7L438.3 401.0L435.1 401.5L432.6 401.4L429.0 394.6L426.6 392.0L423.1 394.0L421.4 392.8L417.7 392.3L417.1 388.8L413.9 388.8L407.5 391.6L401.0 392.6L400.4 395.5L402.2 396.6L400.4 397.4L399.8 398.5L401.4 400.2L397.8 402.3L393.6 400.7L391.4 402.0L389.3 401.0L385.6 399.1L383.1 399.1L379.5 402.0L379.3 403.9L376.6 405.7L375.8 407.8L377.1 409.6L378.5 409.4L380.0 412.8M385.9 423.7L388.5 422.5L391.0 424.8L391.8 424.8L391.8 416.2L396.1 414.9L400.5 417.6L402.1 419.8L407.0 419.3L409.0 420.9L408.8 423.2L409.7 423.5L412.2 425.3L413.2 426.2L415.6 424.6L417.3 422.7L417.7 421.6L421.6 422.1L421.7 420.9L424.1 421.2L425.8 421.0L431.1 421.4L432.9 423.0M391.8 424.8L393.7 424.8L393.6 423.5L396.3 421.4L398.7 422.8L398.8 424.6L401.9 425.3L402.7 427.7L405.8 430.1L409.7 433.5M411.9 433.9L412.9 431.7L411.2 428.6L414.4 425.9L416.6 427.3L417.3 427.3L420.9 425.9L417.3 422.7M416.6 427.7L414.8 428.8L418.2 428.8L421.9 428.9" fill="none" stroke="#fff" stroke-width="1.05" stroke-linejoin="round" stroke-linecap="round"/>
<g transform="translate(259.2,331.0)"><path d="M7.20 23.40 C6.30 19.66 0 13.10 0 7.20 A7.20 7.20 0 1 1 14.40 7.20 C14.40 13.10 8.10 19.66 7.20 23.40ZM4.70 7.30a2.5 2.5 0 1 0 5.0 0a2.5 2.5 0 1 0 -5.0 0Z" fill="url(#pgo)" fill-rule="evenodd" stroke="#b26c10" stroke-width="0.8" stroke-linejoin="round"/><path d="M2.2 7.2a5 5 0 0 1 10 0" fill="none" stroke="#fff" stroke-opacity="0.35" stroke-width="1"/></g>
<g transform="translate(18.8,334.1)"><path d="M7.20 23.40 C6.30 19.66 0 13.10 0 7.20 A7.20 7.20 0 1 1 14.40 7.20 C14.40 13.10 8.10 19.66 7.20 23.40ZM4.70 7.30a2.5 2.5 0 1 0 5.0 0a2.5 2.5 0 1 0 -5.0 0Z" fill="url(#pgo)" fill-rule="evenodd" stroke="#b26c10" stroke-width="0.8" stroke-linejoin="round"/><path d="M2.2 7.2a5 5 0 0 1 10 0" fill="none" stroke="#fff" stroke-opacity="0.35" stroke-width="1"/></g>
<g transform="translate(439.7,354.4)"><path d="M7.20 23.40 C6.30 19.66 0 13.10 0 7.20 A7.20 7.20 0 1 1 14.40 7.20 C14.40 13.10 8.10 19.66 7.20 23.40ZM4.70 7.30a2.5 2.5 0 1 0 5.0 0a2.5 2.5 0 1 0 -5.0 0Z" fill="url(#pgo)" fill-rule="evenodd" stroke="#b26c10" stroke-width="0.8" stroke-linejoin="round"/><path d="M2.2 7.2a5 5 0 0 1 10 0" fill="none" stroke="#fff" stroke-opacity="0.35" stroke-width="1"/></g>
<g transform="translate(368.3,358.1)"><path d="M7.20 23.40 C6.30 19.66 0 13.10 0 7.20 A7.20 7.20 0 1 1 14.40 7.20 C14.40 13.10 8.10 19.66 7.20 23.40ZM4.70 7.30a2.5 2.5 0 1 0 5.0 0a2.5 2.5 0 1 0 -5.0 0Z" fill="url(#pgr)" fill-rule="evenodd" stroke="#9c2216" stroke-width="0.8" stroke-linejoin="round"/><path d="M2.2 7.2a5 5 0 0 1 10 0" fill="none" stroke="#fff" stroke-opacity="0.35" stroke-width="1"/></g>
<g transform="translate(561.8,371.6)"><path d="M7.20 23.40 C6.30 19.66 0 13.10 0 7.20 A7.20 7.20 0 1 1 14.40 7.20 C14.40 13.10 8.10 19.66 7.20 23.40ZM4.70 7.30a2.5 2.5 0 1 0 5.0 0a2.5 2.5 0 1 0 -5.0 0Z" fill="url(#pgo)" fill-rule="evenodd" stroke="#b26c10" stroke-width="0.8" stroke-linejoin="round"/><path d="M2.2 7.2a5 5 0 0 1 10 0" fill="none" stroke="#fff" stroke-opacity="0.35" stroke-width="1"/></g>
<g transform="translate(286.4,374.7)"><path d="M7.20 23.40 C6.30 19.66 0 13.10 0 7.20 A7.20 7.20 0 1 1 14.40 7.20 C14.40 13.10 8.10 19.66 7.20 23.40ZM4.70 7.30a2.5 2.5 0 1 0 5.0 0a2.5 2.5 0 1 0 -5.0 0Z" fill="url(#pgb)" fill-rule="evenodd" stroke="#2a5c84" stroke-width="0.8" stroke-linejoin="round"/><path d="M2.2 7.2a5 5 0 0 1 10 0" fill="none" stroke="#fff" stroke-opacity="0.35" stroke-width="1"/></g>
<g transform="translate(283.5,393.4)"><path d="M7.20 23.40 C6.30 19.66 0 13.10 0 7.20 A7.20 7.20 0 1 1 14.40 7.20 C14.40 13.10 8.10 19.66 7.20 23.40ZM4.70 7.30a2.5 2.5 0 1 0 5.0 0a2.5 2.5 0 1 0 -5.0 0Z" fill="url(#pgy)" fill-rule="evenodd" stroke="#b08c0a" stroke-width="0.8" stroke-linejoin="round"/><path d="M2.2 7.2a5 5 0 0 1 10 0" fill="none" stroke="#fff" stroke-opacity="0.35" stroke-width="1"/></g>
<g transform="translate(85.0,400.7)"><path d="M7.20 23.40 C6.30 19.66 0 13.10 0 7.20 A7.20 7.20 0 1 1 14.40 7.20 C14.40 13.10 8.10 19.66 7.20 23.40ZM4.70 7.30a2.5 2.5 0 1 0 5.0 0a2.5 2.5 0 1 0 -5.0 0Z" fill="url(#pgg)" fill-rule="evenodd" stroke="#585858" stroke-width="0.8" stroke-linejoin="round"/><path d="M2.2 7.2a5 5 0 0 1 10 0" fill="none" stroke="#fff" stroke-opacity="0.35" stroke-width="1"/></g>
<g transform="translate(103.6,405.0)"><path d="M7.20 23.40 C6.30 19.66 0 13.10 0 7.20 A7.20 7.20 0 1 1 14.40 7.20 C14.40 13.10 8.10 19.66 7.20 23.40ZM4.70 7.30a2.5 2.5 0 1 0 5.0 0a2.5 2.5 0 1 0 -5.0 0Z" fill="url(#pgo)" fill-rule="evenodd" stroke="#b26c10" stroke-width="0.8" stroke-linejoin="round"/><path d="M2.2 7.2a5 5 0 0 1 10 0" fill="none" stroke="#fff" stroke-opacity="0.35" stroke-width="1"/></g>
<g transform="translate(155.3,412.8)"><path d="M7.20 23.40 C6.30 19.66 0 13.10 0 7.20 A7.20 7.20 0 1 1 14.40 7.20 C14.40 13.10 8.10 19.66 7.20 23.40ZM4.70 7.30a2.5 2.5 0 1 0 5.0 0a2.5 2.5 0 1 0 -5.0 0Z" fill="url(#pgg)" fill-rule="evenodd" stroke="#585858" stroke-width="0.8" stroke-linejoin="round"/><path d="M2.2 7.2a5 5 0 0 1 10 0" fill="none" stroke="#fff" stroke-opacity="0.35" stroke-width="1"/></g>
<g transform="translate(301.6,413.4)"><path d="M7.20 23.40 C6.30 19.66 0 13.10 0 7.20 A7.20 7.20 0 1 1 14.40 7.20 C14.40 13.10 8.10 19.66 7.20 23.40ZM4.70 7.30a2.5 2.5 0 1 0 5.0 0a2.5 2.5 0 1 0 -5.0 0Z" fill="url(#pgy)" fill-rule="evenodd" stroke="#b08c0a" stroke-width="0.8" stroke-linejoin="round"/><path d="M2.2 7.2a5 5 0 0 1 10 0" fill="none" stroke="#fff" stroke-opacity="0.35" stroke-width="1"/></g>
<g transform="translate(397.4,415.2)"><path d="M7.20 23.40 C6.30 19.66 0 13.10 0 7.20 A7.20 7.20 0 1 1 14.40 7.20 C14.40 13.10 8.10 19.66 7.20 23.40ZM4.70 7.30a2.5 2.5 0 1 0 5.0 0a2.5 2.5 0 1 0 -5.0 0Z" fill="url(#pgr)" fill-rule="evenodd" stroke="#9c2216" stroke-width="0.8" stroke-linejoin="round"/><path d="M2.2 7.2a5 5 0 0 1 10 0" fill="none" stroke="#fff" stroke-opacity="0.35" stroke-width="1"/></g>
<g transform="translate(420.1,430.9)"><path d="M7.20 23.40 C6.30 19.66 0 13.10 0 7.20 A7.20 7.20 0 1 1 14.40 7.20 C14.40 13.10 8.10 19.66 7.20 23.40ZM4.70 7.30a2.5 2.5 0 1 0 5.0 0a2.5 2.5 0 1 0 -5.0 0Z" fill="url(#pgy)" fill-rule="evenodd" stroke="#b08c0a" stroke-width="0.8" stroke-linejoin="round"/><path d="M2.2 7.2a5 5 0 0 1 10 0" fill="none" stroke="#fff" stroke-opacity="0.35" stroke-width="1"/></g>
<g transform="translate(115.4,436.6)"><path d="M7.20 23.40 C6.30 19.66 0 13.10 0 7.20 A7.20 7.20 0 1 1 14.40 7.20 C14.40 13.10 8.10 19.66 7.20 23.40ZM4.70 7.30a2.5 2.5 0 1 0 5.0 0a2.5 2.5 0 1 0 -5.0 0Z" fill="url(#pgr)" fill-rule="evenodd" stroke="#9c2216" stroke-width="0.8" stroke-linejoin="round"/><path d="M2.2 7.2a5 5 0 0 1 10 0" fill="none" stroke="#fff" stroke-opacity="0.35" stroke-width="1"/></g>
<g transform="translate(485.8,437.4)"><path d="M7.20 23.40 C6.30 19.66 0 13.10 0 7.20 A7.20 7.20 0 1 1 14.40 7.20 C14.40 13.10 8.10 19.66 7.20 23.40ZM4.70 7.30a2.5 2.5 0 1 0 5.0 0a2.5 2.5 0 1 0 -5.0 0Z" fill="url(#pgr)" fill-rule="evenodd" stroke="#9c2216" stroke-width="0.8" stroke-linejoin="round"/><path d="M2.2 7.2a5 5 0 0 1 10 0" fill="none" stroke="#fff" stroke-opacity="0.35" stroke-width="1"/></g>
<g transform="translate(269.0,440.0)"><path d="M7.20 23.40 C6.30 19.66 0 13.10 0 7.20 A7.20 7.20 0 1 1 14.40 7.20 C14.40 13.10 8.10 19.66 7.20 23.40ZM4.70 7.30a2.5 2.5 0 1 0 5.0 0a2.5 2.5 0 1 0 -5.0 0Z" fill="url(#pgy)" fill-rule="evenodd" stroke="#b08c0a" stroke-width="0.8" stroke-linejoin="round"/><path d="M2.2 7.2a5 5 0 0 1 10 0" fill="none" stroke="#fff" stroke-opacity="0.35" stroke-width="1"/></g>
<g transform="translate(459.5,441.0)"><path d="M7.20 23.40 C6.30 19.66 0 13.10 0 7.20 A7.20 7.20 0 1 1 14.40 7.20 C14.40 13.10 8.10 19.66 7.20 23.40ZM4.70 7.30a2.5 2.5 0 1 0 5.0 0a2.5 2.5 0 1 0 -5.0 0Z" fill="url(#pgr)" fill-rule="evenodd" stroke="#9c2216" stroke-width="0.8" stroke-linejoin="round"/><path d="M2.2 7.2a5 5 0 0 1 10 0" fill="none" stroke="#fff" stroke-opacity="0.35" stroke-width="1"/></g>
<g transform="translate(186.8,476.2)"><path d="M7.20 23.40 C6.30 19.66 0 13.10 0 7.20 A7.20 7.20 0 1 1 14.40 7.20 C14.40 13.10 8.10 19.66 7.20 23.40ZM4.70 7.30a2.5 2.5 0 1 0 5.0 0a2.5 2.5 0 1 0 -5.0 0Z" fill="url(#pgy)" fill-rule="evenodd" stroke="#b08c0a" stroke-width="0.8" stroke-linejoin="round"/><path d="M2.2 7.2a5 5 0 0 1 10 0" fill="none" stroke="#fff" stroke-opacity="0.35" stroke-width="1"/></g>
<g transform="translate(463.9,480.4)"><path d="M7.20 23.40 C6.30 19.66 0 13.10 0 7.20 A7.20 7.20 0 1 1 14.40 7.20 C14.40 13.10 8.10 19.66 7.20 23.40ZM4.70 7.30a2.5 2.5 0 1 0 5.0 0a2.5 2.5 0 1 0 -5.0 0Z" fill="url(#pgr)" fill-rule="evenodd" stroke="#9c2216" stroke-width="0.8" stroke-linejoin="round"/><path d="M2.2 7.2a5 5 0 0 1 10 0" fill="none" stroke="#fff" stroke-opacity="0.35" stroke-width="1"/></g>
<g transform="translate(167.0,494.0)"><path d="M7.20 23.40 C6.30 19.66 0 13.10 0 7.20 A7.20 7.20 0 1 1 14.40 7.20 C14.40 13.10 8.10 19.66 7.20 23.40ZM4.70 7.30a2.5 2.5 0 1 0 5.0 0a2.5 2.5 0 1 0 -5.0 0Z" fill="url(#pgy)" fill-rule="evenodd" stroke="#b08c0a" stroke-width="0.8" stroke-linejoin="round"/><path d="M2.2 7.2a5 5 0 0 1 10 0" fill="none" stroke="#fff" stroke-opacity="0.35" stroke-width="1"/></g>
<g transform="translate(223.2,494.0)"><path d="M7.20 23.40 C6.30 19.66 0 13.10 0 7.20 A7.20 7.20 0 1 1 14.40 7.20 C14.40 13.10 8.10 19.66 7.20 23.40ZM4.70 7.30a2.5 2.5 0 1 0 5.0 0a2.5 2.5 0 1 0 -5.0 0Z" fill="url(#pgy)" fill-rule="evenodd" stroke="#b08c0a" stroke-width="0.8" stroke-linejoin="round"/><path d="M2.2 7.2a5 5 0 0 1 10 0" fill="none" stroke="#fff" stroke-opacity="0.35" stroke-width="1"/></g>
<g transform="translate(190.2,531.2)"><path d="M7.20 23.40 C6.30 19.66 0 13.10 0 7.20 A7.20 7.20 0 1 1 14.40 7.20 C14.40 13.10 8.10 19.66 7.20 23.40ZM4.70 7.30a2.5 2.5 0 1 0 5.0 0a2.5 2.5 0 1 0 -5.0 0Z" fill="url(#pgb)" fill-rule="evenodd" stroke="#2a5c84" stroke-width="0.8" stroke-linejoin="round"/><path d="M2.2 7.2a5 5 0 0 1 10 0" fill="none" stroke="#fff" stroke-opacity="0.35" stroke-width="1"/></g>
<g transform="translate(494.6,533.1)"><path d="M7.20 23.40 C6.30 19.66 0 13.10 0 7.20 A7.20 7.20 0 1 1 14.40 7.20 C14.40 13.10 8.10 19.66 7.20 23.40ZM4.70 7.30a2.5 2.5 0 1 0 5.0 0a2.5 2.5 0 1 0 -5.0 0Z" fill="url(#pgg)" fill-rule="evenodd" stroke="#585858" stroke-width="0.8" stroke-linejoin="round"/><path d="M2.2 7.2a5 5 0 0 1 10 0" fill="none" stroke="#fff" stroke-opacity="0.35" stroke-width="1"/></g>
<g transform="translate(537.5,543.1)"><path d="M7.20 23.40 C6.30 19.66 0 13.10 0 7.20 A7.20 7.20 0 1 1 14.40 7.20 C14.40 13.10 8.10 19.66 7.20 23.40ZM4.70 7.30a2.5 2.5 0 1 0 5.0 0a2.5 2.5 0 1 0 -5.0 0Z" fill="url(#pgg)" fill-rule="evenodd" stroke="#585858" stroke-width="0.8" stroke-linejoin="round"/><path d="M2.2 7.2a5 5 0 0 1 10 0" fill="none" stroke="#fff" stroke-opacity="0.35" stroke-width="1"/></g>
<g transform="translate(172.1,554.9)"><path d="M7.20 23.40 C6.30 19.66 0 13.10 0 7.20 A7.20 7.20 0 1 1 14.40 7.20 C14.40 13.10 8.10 19.66 7.20 23.40ZM4.70 7.30a2.5 2.5 0 1 0 5.0 0a2.5 2.5 0 1 0 -5.0 0Z" fill="url(#pgr)" fill-rule="evenodd" stroke="#9c2216" stroke-width="0.8" stroke-linejoin="round"/><path d="M2.2 7.2a5 5 0 0 1 10 0" fill="none" stroke="#fff" stroke-opacity="0.35" stroke-width="1"/></g>
</svg>
<div class="abs" style="left:586px;top:191px;width:24px;height:48px;background:#fff;box-shadow:0 1px 4px rgba(0,0,0,.3);border-radius:1px"></div>
<div class="abs" style="left:586px;top:214px;width:24px;height:1px;background:#e2e2e2"></div>
<svg class="abs" style="left:586px;top:191px;width:24px;height:48px" viewBox="0 0 24 48"><path d="M6.5 12h11M12 6.5v11M6.5 35.5h11" stroke="#999" stroke-width="1" fill="none"/></svg>
</div>
<div id="right">
<div id="tb1">
<div class="abs" style="left:135px;top:0;width:45px;height:34px;background:#666"></div>
<svg class="abs" style="left:14.0px;top:9.0px;width:16px;height:16px;" viewBox="0 0 16 16" fill="#444"><path d="M8 4.754a3.246 3.246 0 1 0 0 6.492 3.246 3.246 0 0 0 0-6.492M5.754 8a2.246 2.246 0 1 1 4.492 0 2.246 2.246 0 0 1-4.492 0"></path><path d="M9.796 1.343c-.527-1.79-3.065-1.79-3.592 0l-.094.319a.873.873 0 0 1-1.255.52l-.292-.16c-1.64-.892-3.433.902-2.54 2.541l.159.292a.873.873 0 0 1-.52 1.255l-.319.094c-1.79.527-1.79 3.065 0 3.592l.319.094a.873.873 0 0 1 .52 1.255l-.16.292c-.892 1.64.901 3.434 2.541 2.54l.292-.159a.873.873 0 0 1 1.255.52l.094.319c.527 1.79 3.065 1.79 3.592 0l.094-.319a.873.873 0 0 1 1.255-.52l.292.16c1.64.893 3.434-.902 2.54-2.541l-.159-.292a.873.873 0 0 1 .52-1.255l.319-.094c1.79-.527 1.79-3.065 0-3.592l-.319-.094a.873.873 0 0 1-.52-1.255l.16-.292c.893-1.64-.902-3.433-2.541-2.54l-.292.159a.873.873 0 0 1-1.255-.52zm-2.633.283c.246-.835 1.428-.835 1.674 0l.094.319a1.873 1.873 0 0 0 2.693 1.115l.291-.16c.764-.415 1.6.42 1.184 1.185l-.159.292a1.873 1.873 0 0 0 1.116 2.692l.318.094c.835.246.835 1.428 0 1.674l-.319.094a1.873 1.873 0 0 0-1.115 2.693l.16.291c.415.764-.42 1.6-1.185 1.184l-.291-.159a1.873 1.873 0 0 0-2.693 1.116l-.094.318c-.246.835-1.428.835-1.674 0l-.094-.319a1.873 1.873 0 0 0-2.692-1.115l-.292.16c-.764.415-1.6-.42-1.184-1.185l.159-.291A1.873 1.873 0 0 0 1.945 8.93l-.319-.094c-.835-.246-.835-1.428 0-1.674l.319-.094A1.873 1.873 0 0 0 3.06 4.377l-.16-.292c-.415-.764.42-1.6 1.185-1.184l.292.159a1.873 1.873 0 0 0 2.692-1.115z"></path></svg>
<svg class="abs" style="left:59.099999999999994px;top:9.0px;width:16px;height:16px;" viewBox="0 0 16 16" fill="#444"><path d="M8 5a1.5 1.5 0 1 0 0-3 1.5 1.5 0 0 0 0 3m4 3a1.5 1.5 0 1 0 0-3 1.5 1.5 0 0 0 0 3M5.5 7a1.5 1.5 0 1 1-3 0 1.5 1.5 0 0 1 3 0m.5 6a1.5 1.5 0 1 0 0-3 1.5 1.5 0 0 0 0 3"></path><path d="M16 8c0 3.15-1.866 2.585-3.567 2.07C11.42 9.763 10.465 9.473 10 10c-.603.683-.475 1.819-.351 2.92C9.826 14.495 9.996 16 8 16a8 8 0 1 1 8-8m-8 7c.611 0 .654-.171.655-.176.078-.146.124-.464.07-1.119-.014-.168-.037-.37-.061-.591-.052-.464-.112-1.005-.118-1.462-.01-.707.083-1.61.704-2.314.369-.417.845-.578 1.272-.618.404-.038.812.026 1.16.104.343.077.702.186 1.025.284l.028.008c.346.105.658.199.953.266.653.148.904.083.991.024C14.717 9.38 15 9.161 15 8a7 7 0 1 0-7 7"></path></svg>
<svg class="abs" style="left:104.2px;top:9.0px;width:16px;height:16px;" viewBox="0 0 16 16" fill="#444"><path d="M2 1a1 1 0 1 0 0 2 1 1 0 0 0 0-2M0 2a2 2 0 0 1 3.937-.5h8.126A2 2 0 1 1 14.5 3.937v8.126a2 2 0 1 1-2.437 2.437H3.937A2 2 0 1 1 1.5 12.063V3.937A2 2 0 0 1 0 2m2.5 1.937v8.126c.703.18 1.256.734 1.437 1.437h8.126a2 2 0 0 1 1.437-1.437V3.937A2 2 0 0 1 12.063 2.5H3.937A2 2 0 0 1 2.5 3.937M14 1a1 1 0 1 0 0 2 1 1 0 0 0 0-2M2 13a1 1 0 1 0 0 2 1 1 0 0 0 0-2m12 0a1 1 0 1 0 0 2 1 1 0 0 0 0-2"></path></svg>
<svg class="abs" style="left:149.3px;top:9.0px;width:16px;height:16px;" viewBox="0 0 16 16" fill="#fff"><path d="M4.318 2.687C5.234 2.271 6.536 2 8 2s2.766.27 3.682.687C12.644 3.125 13 3.627 13 4c0 .374-.356.875-1.318 1.313C10.766 5.729 9.464 6 8 6s-2.766-.27-3.682-.687C3.356 4.875 3 4.373 3 4c0-.374.356-.875 1.318-1.313M13 5.698V7c0 .374-.356.875-1.318 1.313C10.766 8.729 9.464 9 8 9s-2.766-.27-3.682-.687C3.356 7.875 3 7.373 3 7V5.698c.271.202.58.378.904.525C4.978 6.711 6.427 7 8 7s3.022-.289 4.096-.777A5 5 0 0 0 13 5.698M14 4c0-1.007-.875-1.755-1.904-2.223C11.022 1.289 9.573 1 8 1s-3.022.289-4.096.777C2.875 2.245 2 2.993 2 4v9c0 1.007.875 1.755 1.904 2.223C4.978 15.71 6.427 16 8 16s3.022-.289 4.096-.777C13.125 14.755 14 14.007 14 13zm-1 4.698V10c0 .374-.356.875-1.318 1.313C10.766 11.729 9.464 12 8 12s-2.766-.27-3.682-.687C3.356 10.875 3 10.373 3 10V8.698c.271.202.58.378.904.525C4.978 9.71 6.427 10 8 10s3.022-.289 4.096-.777A5 5 0 0 0 13 8.698m0 3V13c0 .374-.356.875-1.318 1.313C10.766 14.729 9.464 15 8 15s-2.766-.27-3.682-.687C3.356 13.875 3 13.373 3 13v-1.302c.271.202.58.378.904.525C4.978 12.71 6.427 13 8 13s3.022-.289 4.096-.777c.324-.147.633-.323.904-.525"></path></svg>
<svg class="abs" style="left:194.4px;top:9.0px;width:16px;height:16px;" viewBox="0 0 16 16" fill="#444"><path d="M1.5 1.5A.5.5 0 0 1 2 1h12a.5.5 0 0 1 .5.5v2a.5.5 0 0 1-.128.334L10 8.692V13.5a.5.5 0 0 1-.342.474l-3 1A.5.5 0 0 1 6 14.5V8.692L1.628 3.834A.5.5 0 0 1 1.5 3.5zm1 .5v1.308l4.372 4.858A.5.5 0 0 1 7 8.5v5.306l2-.666V8.5a.5.5 0 0 1 .128-.334L13.5 3.308V2z"></path></svg>
<svg class="abs" style="left:239.5px;top:9.0px;width:16px;height:16px;" viewBox="0 0 16 16" fill="#444"><path d="M15.545 6.558a9.4 9.4 0 0 1 .139 1.626c0 2.434-.87 4.492-2.384 5.885h.002C11.978 15.292 10.158 16 8 16A8 8 0 1 1 8 0a7.7 7.7 0 0 1 5.352 2.082l-2.284 2.284A4.35 4.35 0 0 0 8 3.166c-2.087 0-3.86 1.408-4.492 3.304a4.8 4.8 0 0 0 0 3.063h.003c.635 1.893 2.405 3.301 4.492 3.301 1.078 0 2.004-.276 2.722-.764h-.003a3.7 3.7 0 0 0 1.599-2.431H8v-3.08z"></path></svg>
<svg class="abs" style="left:284.6px;top:9.0px;width:16px;height:16px;" viewBox="0 0 16 16" fill="#444"><path d="M2.5 4a.5.5 0 1 0 0-1 .5.5 0 0 0 0 1m2-.5a.5.5 0 1 1-1 0 .5.5 0 0 1 1 0m1 .5a.5.5 0 1 0 0-1 .5.5 0 0 0 0 1"></path><path d="M2 1a2 2 0 0 0-2 2v10a2 2 0 0 0 2 2h12a2 2 0 0 0 2-2V3a2 2 0 0 0-2-2zm12 1a1 1 0 0 1 1 1v2H1V3a1 1 0 0 1 1-1zM1 13V6h4v8H2a1 1 0 0 1-1-1m5 1V6h9v7a1 1 0 0 1-1 1z"></path></svg>
<svg class="abs" style="left:329.7px;top:9.0px;width:16px;height:16px;" viewBox="0 0 16 16" fill="#444"><path d="M5 8a2 2 0 1 0 0-4 2 2 0 0 0 0 4m4-2.5a.5.5 0 0 1 .5-.5h4a.5.5 0 0 1 0 1h-4a.5.5 0 0 1-.5-.5M9 8a.5.5 0 0 1 .5-.5h4a.5.5 0 0 1 0 1h-4A.5.5 0 0 1 9 8m1 2.5a.5.5 0 0 1 .5-.5h3a.5.5 0 0 1 0 1h-3a.5.5 0 0 1-.5-.5"></path><path d="M2 2a2 2 0 0 0-2 2v8a2 2 0 0 0 2 2h12a2 2 0 0 0 2-2V4a2 2 0 0 0-2-2zM1 4a1 1 0 0 1 1-1h12a1 1 0 0 1 1 1v8a1 1 0 0 1-1 1H8.96q.04-.245.04-.5C9 10.567 7.21 9 5 9c-2.086 0-3.8 1.398-3.984 3.181A1 1 0 0 1 1 12z"></path></svg>
<svg class="abs" style="left:374.8px;top:9.0px;width:16px;height:16px;" viewBox="0 0 16 16" fill="#444"><path d="M8 3a.5.5 0 0 1 .5.5v2a.5.5 0 0 1-1 0v-2A.5.5 0 0 1 8 3m4 8a4 4 0 0 1-8 0V5a4 4 0 1 1 8 0zM8 0a5 5 0 0 0-5 5v6a5 5 0 0 0 10 0V5a5 5 0 0 0-5-5"></path></svg>
<svg class="abs" style="left:419.90000000000003px;top:9.0px;width:16px;height:16px;" viewBox="0 0 16 16" fill="#444"><path d="M6.002 5.5a1.5 1.5 0 1 1-3 0 1.5 1.5 0 0 1 3 0"></path><path d="M2.002 1a2 2 0 0 0-2 2v10a2 2 0 0 0 2 2h12a2 2 0 0 0 2-2V3a2 2 0 0 0-2-2zm12 1a1 1 0 0 1 1 1v6.5l-3.777-1.947a.5.5 0 0 0-.577.093l-3.71 3.71-2.66-1.772a.5.5 0 0 0-.63.062L1.002 12V3a1 1 0 0 1 1-1z"></path></svg>
<svg class="abs" style="left:465.0px;top:9.0px;width:16px;height:16px;" viewBox="0 0 16 16" fill="#444"><path d="M4.5 9a3.5 3.5 0 1 0 0 7h7a3.5 3.5 0 1 0 0-7zm7 6a2.5 2.5 0 1 1 0-5 2.5 2.5 0 0 1 0 5m-7-14a2.5 2.5 0 1 0 0 5 2.5 2.5 0 0 0 0-5m2.45 0A3.5 3.5 0 0 1 8 3.5 3.5 3.5 0 0 1 6.95 6h4.55a2.5 2.5 0 0 0 0-5zM4.5 0h7a3.5 3.5 0 1 1 0 7h-7a3.5 3.5 0 1 1 0-7"></path></svg>
<svg class="abs" style="left:510.1px;top:9.0px;width:16px;height:16px;" viewBox="0 0 16 16" fill="#444"><path fill-rule="evenodd" d="M1.114 8.063V7.9c1.005-.102 1.497-.615 1.497-1.6V4.503c0-1.094.39-1.538 1.354-1.538h.273V2h-.376C2.25 2 1.49 2.759 1.49 4.352v1.524c0 1.094-.376 1.456-1.49 1.456v1.299c1.114 0 1.49.362 1.49 1.456v1.524c0 1.593.759 2.352 2.372 2.352h.376v-.964h-.273c-.964 0-1.354-.444-1.354-1.538V9.663c0-.984-.492-1.497-1.497-1.6M14.886 7.9v.164c-1.005.103-1.497.616-1.497 1.6v1.798c0 1.094-.39 1.538-1.354 1.538h-.273v.964h.376c1.613 0 2.372-.759 2.372-2.352v-1.524c0-1.094.376-1.456 1.49-1.456v-1.3c-1.114 0-1.49-.362-1.49-1.456V4.352C14.51 2.759 13.75 2 12.138 2h-.376v.964h.273c.964 0 1.354.444 1.354 1.538V6.3c0 .984.492 1.497 1.497 1.6M7.5 11.5V9.207l-1.621 1.621-.707-.707L6.792 8.5H4.5v-1h2.293L5.172 5.879l.707-.707L7.5 6.792V4.5h1v2.293l1.621-1.621.707.707L9.208 7.5H11.5v1H9.207l1.621 1.621-.707.707L8.5 9.208V11.5z"></path></svg>
<svg class="abs" style="left:555.2px;top:9.0px;width:16px;height:16px;" viewBox="0 0 16 16" fill="#444"><path d="M5.854 4.854a.5.5 0 1 0-.708-.708l-3.5 3.5a.5.5 0 0 0 0 .708l3.5 3.5a.5.5 0 0 0 .708-.708L2.707 8zm4.292 0a.5.5 0 0 1 .708-.708l3.5 3.5a.5.5 0 0 1 0 .708l-3.5 3.5a.5.5 0 0 1-.708-.708L13.293 8z"></path></svg>
<svg class="abs" style="left:600.3000000000001px;top:9.0px;width:16px;height:16px;" viewBox="0 0 16 16" fill="#444"><path d="M7.657 6.247c.11-.33.576-.33.686 0l.645 1.937a2.89 2.89 0 0 0 1.829 1.828l1.936.645c.33.11.33.576 0 .686l-1.937.645a2.89 2.89 0 0 0-1.828 1.829l-.645 1.936a.361.361 0 0 1-.686 0l-.645-1.937a2.89 2.89 0 0 0-1.828-1.828l-1.937-.645a.361.361 0 0 1 0-.686l1.937-.645a2.89 2.89 0 0 0 1.828-1.828zM3.794 1.148a.217.217 0 0 1 .412 0l.387 1.162c.173.518.579.924 1.097 1.097l1.162.387a.217.217 0 0 1 0 .412l-1.162.387A1.73 1.73 0 0 0 4.593 5.69l-.387 1.162a.217.217 0 0 1-.412 0L3.407 5.69A1.73 1.73 0 0 0 2.31 4.593l-1.162-.387a.217.217 0 0 1 0-.412l1.162-.387A1.73 1.73 0 0 0 3.407 2.31zM10.863.099a.145.145 0 0 1 .274 0l.258.774c.115.346.386.617.732.732l.774.258a.145.145 0 0 1 0 .274l-.774.258a1.16 1.16 0 0 0-.732.732l-.258.774a.145.145 0 0 1-.274 0l-.258-.774a1.16 1.16 0 0 0-.732-.732L9.1 2.137a.145.145 0 0 1 0-.274l.774-.258c.346-.115.617-.386.732-.732z"></path></svg>
</div>
<div id="tb2">
<div class="abs" style="left:56px;top:0;width:37px;height:34px;background:#cfcfcf"></div>
<svg class="abs" style="left:13.0px;top:11.0px;width:12px;height:12px;" viewBox="0 0 16 16" fill="#555"><path fill-rule="evenodd" d="M11.354 1.646a.5.5 0 0 1 0 .708L5.707 8l5.647 5.646a.5.5 0 0 1-.708.708l-6-6a.5.5 0 0 1 0-.708l6-6a.5.5 0 0 1 .708 0"></path></svg>
<svg class="abs" style="left:29.5px;top:10.5px;width:13px;height:13px;" viewBox="0 0 16 16" fill="#555"><path d="M4.318 2.687C5.234 2.271 6.536 2 8 2s2.766.27 3.682.687C12.644 3.125 13 3.627 13 4c0 .374-.356.875-1.318 1.313C10.766 5.729 9.464 6 8 6s-2.766-.27-3.682-.687C3.356 4.875 3 4.373 3 4c0-.374.356-.875 1.318-1.313M13 5.698V7c0 .374-.356.875-1.318 1.313C10.766 8.729 9.464 9 8 9s-2.766-.27-3.682-.687C3.356 7.875 3 7.373 3 7V5.698c.271.202.58.378.904.525C4.978 6.711 6.427 7 8 7s3.022-.289 4.096-.777A5 5 0 0 0 13 5.698M14 4c0-1.007-.875-1.755-1.904-2.223C11.022 1.289 9.573 1 8 1s-3.022.289-4.096.777C2.875 2.245 2 2.993 2 4v9c0 1.007.875 1.755 1.904 2.223C4.978 15.71 6.427 16 8 16s3.022-.289 4.096-.777C13.125 14.755 14 14.007 14 13zm-1 4.698V10c0 .374-.356.875-1.318 1.313C10.766 11.729 9.464 12 8 12s-2.766-.27-3.682-.687C3.356 10.875 3 10.373 3 10V8.698c.271.202.58.378.904.525C4.978 9.71 6.427 10 8 10s3.022-.289 4.096-.777A5 5 0 0 0 13 8.698m0 3V13c0 .374-.356.875-1.318 1.313C10.766 14.729 9.464 15 8 15s-2.766-.27-3.682-.687C3.356 13.875 3 13.373 3 13v-1.302c.271.202.58.378.904.525C4.978 12.71 6.427 13 8 13s3.022-.289 4.096-.777c.324-.147.633-.323.904-.525"></path></svg>
<svg class="abs" style="left:66.5px;top:9.5px;width:15px;height:15px;" viewBox="0 0 16 16" fill="#666"><path fill-rule="evenodd" d="M5 11.5a.5.5 0 0 1 .5-.5h9a.5.5 0 0 1 0 1h-9a.5.5 0 0 1-.5-.5m0-4a.5.5 0 0 1 .5-.5h9a.5.5 0 0 1 0 1h-9a.5.5 0 0 1-.5-.5m0-4a.5.5 0 0 1 .5-.5h9a.5.5 0 0 1 0 1h-9a.5.5 0 0 1-.5-.5m-3 1a1 1 0 1 0 0-2 1 1 0 0 0 0 2m0 4a1 1 0 1 0 0-2 1 1 0 0 0 0 2m0 4a1 1 0 1 0 0-2 1 1 0 0 0 0 2"></path></svg>
<svg class="abs" style="left:105.0px;top:10.0px;width:14px;height:14px;" viewBox="0 0 16 16" fill="#444"><path d="M12.146.146a.5.5 0 0 1 .708 0l3 3a.5.5 0 0 1 0 .708l-10 10a.5.5 0 0 1-.168.11l-5 2a.5.5 0 0 1-.65-.65l2-5a.5.5 0 0 1 .11-.168zM11.207 2.5 13.5 4.793 14.793 3.5 12.5 1.207zm1.586 3L10.5 3.207 4 9.707V10h.5a.5.5 0 0 1 .5.5v.5h.5a.5.5 0 0 1 .5.5v.5h.293zm-9.761 5.175-.106.106-1.528 3.821 3.821-1.528.106-.106A.5.5 0 0 1 5 12.5V12h-.5a.5.5 0 0 1-.5-.5V11h-.5a.5.5 0 0 1-.468-.325"></path></svg>
<svg class="abs" style="left:143.0px;top:10.0px;width:14px;height:14px;" viewBox="0 0 16 16" fill="#444"><path d="M8 4.754a3.246 3.246 0 1 0 0 6.492 3.246 3.246 0 0 0 0-6.492M5.754 8a2.246 2.246 0 1 1 4.492 0 2.246 2.246 0 0 1-4.492 0"></path><path d="M9.796 1.343c-.527-1.79-3.065-1.79-3.592 0l-.094.319a.873.873 0 0 1-1.255.52l-.292-.16c-1.64-.892-3.433.902-2.54 2.541l.159.292a.873.873 0 0 1-.52 1.255l-.319.094c-1.79.527-1.79 3.065 0 3.592l.319.094a.873.873 0 0 1 .52 1.255l-.16.292c-.892 1.64.901 3.434 2.541 2.54l.292-.159a.873.873 0 0 1 1.255.52l.094.319c.527 1.79 3.065 1.79 3.592 0l.094-.319a.873.873 0 0 1 1.255-.52l.292.16c1.64.893 3.434-.902 2.54-2.541l-.159-.292a.873.873 0 0 1 .52-1.255l.319-.094c1.79-.527 1.79-3.065 0-3.592l-.319-.094a.873.873 0 0 1-.52-1.255l.16-.292c.893-1.64-.902-3.433-2.541-2.54l-.292.159a.873.873 0 0 1-1.255-.52zm-2.633.283c.246-.835 1.428-.835 1.674 0l.094.319a1.873 1.873 0 0 0 2.693 1.115l.291-.16c.764-.415 1.6.42 1.184 1.185l-.159.292a1.873 1.873 0 0 0 1.116 2.692l.318.094c.835.246.835 1.428 0 1.674l-.319.094a1.873 1.873 0 0 0-1.115 2.693l.16.291c.415.764-.42 1.6-1.185 1.184l-.291-.159a1.873 1.873 0 0 0-2.693 1.116l-.094.318c-.246.835-1.428.835-1.674 0l-.094-.319a1.873 1.873 0 0 0-2.692-1.115l-.292.16c-.764.415-1.6-.42-1.184-1.185l.159-.291A1.873 1.873 0 0 0 1.945 8.93l-.319-.094c-.835-.246-.835-1.428 0-1.674l.319-.094A1.873 1.873 0 0 0 3.06 4.377l-.16-.292c-.415-.764.42-1.6 1.185-1.184l.292.159a1.873 1.873 0 0 0 2.692-1.115z"></path></svg>
<div class="abs" style="left:298px;top:9px;font-size:14.5px;color:#8a8a8a">Table</div>
<svg class="abs" style="left:387.0px;top:10.0px;width:14px;height:14px;" viewBox="0 0 16 16" fill="#333"><path d="M11.742 10.344a6.5 6.5 0 1 0-1.397 1.398h-.001q.044.06.098.115l3.85 3.85a1 1 0 0 0 1.415-1.414l-3.85-3.85a1 1 0 0 0-.115-.1zM12 6.5a5.5 5.5 0 1 1-11 0 5.5 5.5 0 0 1 11 0"></path></svg>
<div class="abs" style="left:414px;top:9px;font-size:14px;color:#cfcfcf">Search...</div>
<svg class="abs" style="left:549.0px;top:10.0px;width:14px;height:14px;" viewBox="0 0 16 16" fill="#555"><path d="M16 8s-3-5.5-8-5.5S0 8 0 8s3 5.5 8 5.5S16 8 16 8M1.173 8a13 13 0 0 1 1.66-2.043C4.12 4.668 5.88 3.5 8 3.5s3.879 1.168 5.168 2.457A13 13 0 0 1 14.828 8q-.086.13-.195.288c-.335.48-.83 1.12-1.465 1.755C11.879 11.332 10.119 12.5 8 12.5s-3.879-1.168-5.168-2.457A13 13 0 0 1 1.172 8z"></path><path d="M8 5.5a2.5 2.5 0 1 0 0 5 2.5 2.5 0 0 0 0-5M4.5 8a3.5 3.5 0 1 1 7 0 3.5 3.5 0 0 1-7 0"></path></svg>
<svg class="abs" style="left:569px;top:16px;width:8px;height:5px" viewBox="0 0 8 5"><path d="M0 0h8L4 4.6z" fill="#333"/></svg>
<svg class="abs" style="left:598.0px;top:7.0px;width:20px;height:20px;" viewBox="0 0 16 16" fill="#777"><path d="M8 4a.5.5 0 0 1 .5.5v3h3a.5.5 0 0 1 0 1h-3v3a.5.5 0 0 1-1 0v-3h-3a.5.5 0 0 1 0-1h3v-3A.5.5 0 0 1 8 4"></path></svg>
</div>
<div class="row hd" style="top:68px;height:37px;border-top:none"><span class="c1">id</span><span class="c2">firstName</span><span class="c3">lastName</span><span style="left:260px">location</span><span style="left:452px">images</span></div>
<div class="row" style="top:105px"><span class="c1">1</span><span class="c2">Emily</span><span class="c3">Johnson</span><svg class="pin" viewBox="0 0 13 19"><defs><linearGradient id="sgo" x1="0" y1="0" x2="0" y2="1"><stop offset="0" stop-color="#f9cf50"/><stop offset="0.5" stop-color="#eda52c"/><stop offset="1" stop-color="#d07f16"/></linearGradient></defs><path d="M5.70 17.50 C4.80 14.70 0 9.80 0 5.70 A5.70 5.70 0 1 1 11.40 5.70 C11.40 9.80 6.60 14.70 5.70 17.50ZM3.80 5.60a1.9 1.9 0 1 0 3.8 0a1.9 1.9 0 1 0 -3.8 0Z" transform="translate(0.8,0.6)" fill="url(#sgo)" fill-rule="evenodd" stroke="#b26c10" stroke-width="0.55"/></svg><span class="c4">626 Main Street</span><div class="av"><svg viewBox="0 0 28 28" width="28" height="28"><defs><filter id="bl1" x="-10%" y="-10%" width="120%" height="120%"><feGaussianBlur stdDeviation="0.55"/></filter></defs><rect width="28" height="28" fill="#c8a79b"/><g filter="url(#bl1)"><path d="M1.5 29 C1.5 18.5 6 15.2 9.5 14.6 L18.5 14.6 C22 15.2 27 18.5 27 29Z" fill="#14110f"/><path d="M9.2 16.5 C10 12.5 18 12.5 18.8 16.5 L17 19.5 L11 19.5Z" fill="#1d1917"/><ellipse cx="13.8" cy="8.6" rx="3.5" ry="4.5" fill="#c49274"/><path d="M10.2 8.2 C9.6 3.6 12 2.4 14.2 2.5 C16.8 2.6 18.2 4.6 17.5 8.3 C16.8 5.8 12.6 5.0 10.2 8.2Z" fill="#3b2619"/><rect x="13.3" y="21.8" width="1.1" height="1.6" fill="#9cc6c0"/></g></svg></div><div class="sq" style="left:532px"><svg viewBox="0 0 16 16" fill="#555"><path fill-rule="evenodd" d="M4 2a2 2 0 0 1 2-2h8a2 2 0 0 1 2 2v8a2 2 0 0 1-2 2H6a2 2 0 0 1-2-2zm2-1a1 1 0 0 0-1 1v8a1 1 0 0 0 1 1h8a1 1 0 0 0 1-1V2a1 1 0 0 0-1-1zM2 5a1 1 0 0 0-1 1v8a1 1 0 0 0 1 1h8a1 1 0 0 0 1-1v-1h1v1a2 2 0 0 1-2 2H2a2 2 0 0 1-2-2V6a2 2 0 0 1 2-2h1v1z"></path></svg></div><div class="sq" style="left:570px"><svg viewBox="0 0 16 16" fill="#555"><path d="M5.5 5.5A.5.5 0 0 1 6 6v6a.5.5 0 0 1-1 0V6a.5.5 0 0 1 .5-.5m2.5 0a.5.5 0 0 1 .5.5v6a.5.5 0 0 1-1 0V6a.5.5 0 0 1 .5-.5m3 .5a.5.5 0 0 0-1 0v6a.5.5 0 0 0 1 0z"></path><path d="M14.5 3a1 1 0 0 1-1 1H13v9a2 2 0 0 1-2 2H5a2 2 0 0 1-2-2V4h-.5a1 1 0 0 1-1-1V2a1 1 0 0 1 1-1H6a1 1 0 0 1 1-1h2a1 1 0 0 1 1 1h3.5a1 1 0 0 1 1 1zM4.118 4 4 4.059V13a1 1 0 0 0 1 1h6a1 1 0 0 0 1-1V4.059L11.882 4zM2.5 3h11V2h-11z"></path></svg></div></div>
<div class="row" style="top:154px"><span class="c1">2</span><span class="c2">Michael</span><span class="c3">Williams</span><svg class="pin" viewBox="0 0 13 19"><defs><linearGradient id="sgr" x1="0" y1="0" x2="0" y2="1"><stop offset="0" stop-color="#f58a50"/><stop offset="0.5" stop-color="#e4482c"/><stop offset="1" stop-color="#c2281c"/></linearGradient></defs><path d="M5.70 17.50 C4.80 14.70 0 9.80 0 5.70 A5.70 5.70 0 1 1 11.40 5.70 C11.40 9.80 6.60 14.70 5.70 17.50ZM3.80 5.60a1.9 1.9 0 1 0 3.8 0a1.9 1.9 0 1 0 -3.8 0Z" transform="translate(0.8,0.6)" fill="url(#sgr)" fill-rule="evenodd" stroke="#9c2216" stroke-width="0.55"/></svg><span class="c4">385 Fifth Street</span><div class="av"><svg viewBox="0 0 28 28" width="28" height="28"><defs><filter id="bl2" x="-10%" y="-10%" width="120%" height="120%"><feGaussianBlur stdDeviation="0.55"/></filter></defs><rect width="28" height="28" fill="#a9aaa6"/><g filter="url(#bl2)"><rect x="-1" y="-1" width="7" height="30" fill="#333a42"/><rect x="5.5" y="-1" width="3" height="30" fill="#6d747a"/><rect x="19" y="-1" width="10" height="13" fill="#dedbd4"/><rect x="21" y="11" width="8" height="5" fill="#8a8f86"/><rect x="23" y="13" width="4" height="2" fill="#b5524a"/><path d="M3 29 C4 21 8 19 13 18.2 C20 18.2 26 20.5 27.5 29Z" fill="#22262e"/><path d="M9.5 19.6 L12.5 27 L15 19.2Z" fill="#c3cad6"/><ellipse cx="14.6" cy="11" rx="4.6" ry="5.8" fill="#c99c80"/><path d="M9.9 9.8 C9.2 4.4 12.4 2.8 15 3 C18.4 3.2 20 5.8 19.3 9.8 C18 7 13.4 6 9.9 9.8Z" fill="#36271d"/><path d="M10.2 12 C10.6 18 18.6 18 19.1 12 C18 15 11.6 15 10.2 12Z" fill="#4a3628"/><path d="M12.6 13.6 q2 1.4 4 0" stroke="#f1e6dc" stroke-width="0.8" fill="none"/></g></svg></div><div class="sq" style="left:532px"><svg viewBox="0 0 16 16" fill="#555"><path fill-rule="evenodd" d="M4 2a2 2 0 0 1 2-2h8a2 2 0 0 1 2 2v8a2 2 0 0 1-2 2H6a2 2 0 0 1-2-2zm2-1a1 1 0 0 0-1 1v8a1 1 0 0 0 1 1h8a1 1 0 0 0 1-1V2a1 1 0 0 0-1-1zM2 5a1 1 0 0 0-1 1v8a1 1 0 0 0 1 1h8a1 1 0 0 0 1-1v-1h1v1a2 2 0 0 1-2 2H2a2 2 0 0 1-2-2V6a2 2 0 0 1 2-2h1v1z"></path></svg></div><div class="sq" style="left:570px"><svg viewBox="0 0 16 16" fill="#555"><path d="M5.5 5.5A.5.5 0 0 1 6 6v6a.5.5 0 0 1-1 0V6a.5.5 0 0 1 .5-.5m2.5 0a.5.5 0 0 1 .5.5v6a.5.5 0 0 1-1 0V6a.5.5 0 0 1 .5-.5m3 .5a.5.5 0 0 0-1 0v6a.5.5 0 0 0 1 0z"></path><path d="M14.5 3a1 1 0 0 1-1 1H13v9a2 2 0 0 1-2 2H5a2 2 0 0 1-2-2V4h-.5a1 1 0 0 1-1-1V2a1 1 0 0 1 1-1H6a1 1 0 0 1 1-1h2a1 1 0 0 1 1 1h3.5a1 1 0 0 1 1 1zM4.118 4 4 4.059V13a1 1 0 0 0 1 1h6a1 1 0 0 0 1-1V4.059L11.882 4zM2.5 3h11V2h-11z"></path></svg></div></div>
<div class="row" style="top:203px"><span class="c1">3</span><span class="c2">Sophia</span><span class="c3">Brown</span><svg class="pin" viewBox="0 0 13 19"><defs><linearGradient id="sgo" x1="0" y1="0" x2="0" y2="1"><stop offset="0" stop-color="#f9cf50"/><stop offset="0.5" stop-color="#eda52c"/><stop offset="1" stop-color="#d07f16"/></linearGradient></defs><path d="M5.70 17.50 C4.80 14.70 0 9.80 0 5.70 A5.70 5.70 0 1 1 11.40 5.70 C11.40 9.80 6.60 14.70 5.70 17.50ZM3.80 5.60a1.9 1.9 0 1 0 3.8 0a1.9 1.9 0 1 0 -3.8 0Z" transform="translate(0.8,0.6)" fill="url(#sgo)" fill-rule="evenodd" stroke="#b26c10" stroke-width="0.55"/></svg><span class="c4">1642 Ninth Street</span><div class="av"><svg viewBox="0 0 28 28" width="28" height="28"><defs><filter id="bl3" x="-10%" y="-10%" width="120%" height="120%"><feGaussianBlur stdDeviation="0.55"/></filter></defs><rect width="28" height="28" fill="#55554b"/><g filter="url(#bl3)"><rect x="-1" y="-1" width="30" height="10" fill="#67675b"/><rect x="-1" y="18" width="30" height="11" fill="#3c3a33"/><path d="M3.5 29 C4 21.5 8 19.6 13.5 19 C19.5 19.3 24.5 21.5 25 29Z" fill="#0f0f10"/><rect x="11.2" y="16" width="4.8" height="4.5" fill="#111112"/><circle cx="13.8" cy="10.6" r="6.6" fill="#1c1613"/><circle cx="9" cy="12.6" r="3" fill="#1c1613"/><circle cx="18.6" cy="12.6" r="3" fill="#1c1613"/><ellipse cx="13.6" cy="12.2" rx="3.1" ry="4.2" fill="#c39a80"/><path d="M10.4 10.8 C10.6 7.6 16.8 7.6 17 10.8 C15 9.4 12.4 9.4 10.4 10.8Z" fill="#1c1613"/><rect x="-1" y="23" width="5" height="6" fill="#6d3a22"/></g></svg></div><div class="sq" style="left:532px"><svg viewBox="0 0 16 16" fill="#555"><path fill-rule="evenodd" d="M4 2a2 2 0 0 1 2-2h8a2 2 0 0 1 2 2v8a2 2 0 0 1-2 2H6a2 2 0 0 1-2-2zm2-1a1 1 0 0 0-1 1v8a1 1 0 0 0 1 1h8a1 1 0 0 0 1-1V2a1 1 0 0 0-1-1zM2 5a1 1 0 0 0-1 1v8a1 1 0 0 0 1 1h8a1 1 0 0 0 1-1v-1h1v1a2 2 0 0 1-2 2H2a2 2 0 0 1-2-2V6a2 2 0 0 1 2-2h1v1z"></path></svg></div><div class="sq" style="left:570px"><svg viewBox="0 0 16 16" fill="#555"><path d="M5.5 5.5A.5.5 0 0 1 6 6v6a.5.5 0 0 1-1 0V6a.5.5 0 0 1 .5-.5m2.5 0a.5.5 0 0 1 .5.5v6a.5.5 0 0 1-1 0V6a.5.5 0 0 1 .5-.5m3 .5a.5.5 0 0 0-1 0v6a.5.5 0 0 0 1 0z"></path><path d="M14.5 3a1 1 0 0 1-1 1H13v9a2 2 0 0 1-2 2H5a2 2 0 0 1-2-2V4h-.5a1 1 0 0 1-1-1V2a1 1 0 0 1 1-1H6a1 1 0 0 1 1-1h2a1 1 0 0 1 1 1h3.5a1 1 0 0 1 1 1zM4.118 4 4 4.059V13a1 1 0 0 0 1 1h6a1 1 0 0 0 1-1V4.059L11.882 4zM2.5 3h11V2h-11z"></path></svg></div></div>
<div class="row" style="top:252px"><span class="c1">4</span><span class="c2">James</span><span class="c3">Davis</span><svg class="pin" viewBox="0 0 13 19"><defs><linearGradient id="sgo" x1="0" y1="0" x2="0" y2="1"><stop offset="0" stop-color="#f9cf50"/><stop offset="0.5" stop-color="#eda52c"/><stop offset="1" stop-color="#d07f16"/></linearGradient></defs><path d="M5.70 17.50 C4.80 14.70 0 9.80 0 5.70 A5.70 5.70 0 1 1 11.40 5.70 C11.40 9.80 6.60 14.70 5.70 17.50ZM3.80 5.60a1.9 1.9 0 1 0 3.8 0a1.9 1.9 0 1 0 -3.8 0Z" transform="translate(0.8,0.6)" fill="url(#sgo)" fill-rule="evenodd" stroke="#b26c10" stroke-width="0.55"/></svg><span class="c4">238 Jefferson Street</span><div class="av"><svg viewBox="0 0 28 28" width="28" height="28"><defs><filter id="bl4" x="-10%" y="-10%" width="120%" height="120%"><feGaussianBlur stdDeviation="0.55"/></filter><radialGradient id="dg4" cx="0.62" cy="0.12" r="0.75"><stop offset="0" stop-color="#ece79a"/><stop offset="0.45" stop-color="#a9a445"/><stop offset="1" stop-color="#465426"/></radialGradient></defs><rect width="28" height="28" fill="url(#dg4)"/><g filter="url(#bl4)"><rect x="23" y="-1" width="3.4" height="24" fill="#4a3c1a"/><rect x="-1" y="19" width="30" height="3.5" fill="#b9b27a" opacity="0.75"/><rect x="-1" y="22" width="30" height="7" fill="#5f7a2a"/><path d="M1.5 29 C2.5 23 7 21 13.6 20.4 C20.5 21 25.5 23 26.5 29Z" fill="#262b33"/><path d="M11.4 21 L13.6 25.5 L15.8 21Z" fill="#8d949c"/><ellipse cx="13.7" cy="13" rx="4.7" ry="6" fill="#d3a184"/><path d="M8.7 12 C8 6 11.4 4 14.4 4.2 C18.2 4.4 20.2 7.2 19 12.2 C17.6 8.6 12.6 7.4 8.7 12Z" fill="#6b4428"/><path d="M9.3 14.2 C9.8 20.6 17.8 20.6 18.3 14.2 C17 17.4 10.8 17.4 9.3 14.2Z" fill="#8a5334"/><path d="M11.8 15.6 q2 1.3 4 0" stroke="#f3e9e0" stroke-width="0.8" fill="none"/></g></svg></div><div class="sq" style="left:532px"><svg viewBox="0 0 16 16" fill="#555"><path fill-rule="evenodd" d="M4 2a2 2 0 0 1 2-2h8a2 2 0 0 1 2 2v8a2 2 0 0 1-2 2H6a2 2 0 0 1-2-2zm2-1a1 1 0 0 0-1 1v8a1 1 0 0 0 1 1h8a1 1 0 0 0 1-1V2a1 1 0 0 0-1-1zM2 5a1 1 0 0 0-1 1v8a1 1 0 0 0 1 1h8a1 1 0 0 0 1-1v-1h1v1a2 2 0 0 1-2 2H2a2 2 0 0 1-2-2V6a2 2 0 0 1 2-2h1v1z"></path></svg></div><div class="sq" style="left:570px"><svg viewBox="0 0 16 16" fill="#555"><path d="M5.5 5.5A.5.5 0 0 1 6 6v6a.5.5 0 0 1-1 0V6a.5.5 0 0 1 .5-.5m2.5 0a.5.5 0 0 1 .5.5v6a.5.5 0 0 1-1 0V6a.5.5 0 0 1 .5-.5m3 .5a.5.5 0 0 0-1 0v6a.5.5 0 0 0 1 0z"></path><path d="M14.5 3a1 1 0 0 1-1 1H13v9a2 2 0 0 1-2 2H5a2 2 0 0 1-2-2V4h-.5a1 1 0 0 1-1-1V2a1 1 0 0 1 1-1H6a1 1 0 0 1 1-1h2a1 1 0 0 1 1 1h3.5a1 1 0 0 1 1 1zM4.118 4 4 4.059V13a1 1 0 0 0 1 1h6a1 1 0 0 0 1-1V4.059L11.882 4zM2.5 3h11V2h-11z"></path></svg></div></div>
<div class="row" style="top:301px"><span class="c1">5</span><span class="c2">Emma</span><span class="c3">Miller</span><svg class="pin" viewBox="0 0 13 19"><defs><linearGradient id="sgr" x1="0" y1="0" x2="0" y2="1"><stop offset="0" stop-color="#f58a50"/><stop offset="0.5" stop-color="#e4482c"/><stop offset="1" stop-color="#c2281c"/></linearGradient></defs><path d="M5.70 17.50 C4.80 14.70 0 9.80 0 5.70 A5.70 5.70 0 1 1 11.40 5.70 C11.40 9.80 6.60 14.70 5.70 17.50ZM3.80 5.60a1.9 1.9 0 1 0 3.8 0a1.9 1.9 0 1 0 -3.8 0Z" transform="translate(0.8,0.6)" fill="url(#sgr)" fill-rule="evenodd" stroke="#9c2216" stroke-width="0.55"/></svg><span class="c4">607 Fourth Street</span><div class="av"><svg viewBox="0 0 28 28" width="28" height="28"><defs><filter id="bl5" x="-10%" y="-10%" width="120%" height="120%"><feGaussianBlur stdDeviation="0.55"/></filter><radialGradient id="dg5" cx="0.62" cy="0.12" r="0.75"><stop offset="0" stop-color="#ece79a"/><stop offset="0.45" stop-color="#a9a445"/><stop offset="1" stop-color="#465426"/></radialGradient></defs><rect width="28" height="28" fill="url(#dg5)"/><g filter="url(#bl5)"><rect x="23" y="-1" width="3.4" height="24" fill="#4a3c1a"/><rect x="-1" y="19" width="30" height="3.5" fill="#b9b27a" opacity="0.75"/><rect x="-1" y="22" width="30" height="7" fill="#5f7a2a"/><path d="M1.5 29 C2.5 23 7 21 13.6 20.4 C20.5 21 25.5 23 26.5 29Z" fill="#262b33"/><path d="M11.4 21 L13.6 25.5 L15.8 21Z" fill="#8d949c"/><ellipse cx="13.7" cy="13" rx="4.7" ry="6" fill="#d3a184"/><path d="M8.7 12 C8 6 11.4 4 14.4 4.2 C18.2 4.4 20.2 7.2 19 12.2 C17.6 8.6 12.6 7.4 8.7 12Z" fill="#6b4428"/><path d="M9.3 14.2 C9.8 20.6 17.8 20.6 18.3 14.2 C17 17.4 10.8 17.4 9.3 14.2Z" fill="#8a5334"/><path d="M11.8 15.6 q2 1.3 4 0" stroke="#f3e9e0" stroke-width="0.8" fill="none"/></g></svg></div><div class="sq" style="left:532px"><svg viewBox="0 0 16 16" fill="#555"><path fill-rule="evenodd" d="M4 2a2 2 0 0 1 2-2h8a2 2 0 0 1 2 2v8a2 2 0 0 1-2 2H6a2 2 0 0 1-2-2zm2-1a1 1 0 0 0-1 1v8a1 1 0 0 0 1 1h8a1 1 0 0 0 1-1V2a1 1 0 0 0-1-1zM2 5a1 1 0 0 0-1 1v8a1 1 0 0 0 1 1h8a1 1 0 0 0 1-1v-1h1v1a2 2 0 0 1-2 2H2a2 2 0 0 1-2-2V6a2 2 0 0 1 2-2h1v1z"></path></svg></div><div class="sq" style="left:570px"><svg viewBox="0 0 16 16" fill="#555"><path d="M5.5 5.5A.5.5 0 0 1 6 6v6a.5.5 0 0 1-1 0V6a.5.5 0 0 1 .5-.5m2.5 0a.5.5 0 0 1 .5.5v6a.5.5 0 0 1-1 0V6a.5.5 0 0 1 .5-.5m3 .5a.5.5 0 0 0-1 0v6a.5.5 0 0 0 1 0z"></path><path d="M14.5 3a1 1 0 0 1-1 1H13v9a2 2 0 0 1-2 2H5a2 2 0 0 1-2-2V4h-.5a1 1 0 0 1-1-1V2a1 1 0 0 1 1-1H6a1 1 0 0 1 1-1h2a1 1 0 0 1 1 1h3.5a1 1 0 0 1 1 1zM4.118 4 4 4.059V13a1 1 0 0 0 1 1h6a1 1 0 0 0 1-1V4.059L11.882 4zM2.5 3h11V2h-11z"></path></svg></div></div>
<div class="row" style="top:350px"><span class="c1">6</span><span class="c2">Olivia</span><span class="c3">Wilson</span><svg class="pin" viewBox="0 0 13 19"><defs><linearGradient id="sgb" x1="0" y1="0" x2="0" y2="1"><stop offset="0" stop-color="#78b0dc"/><stop offset="0.5" stop-color="#4a8cc0"/><stop offset="1" stop-color="#33719f"/></linearGradient></defs><path d="M5.70 17.50 C4.80 14.70 0 9.80 0 5.70 A5.70 5.70 0 1 1 11.40 5.70 C11.40 9.80 6.60 14.70 5.70 17.50ZM3.80 5.60a1.9 1.9 0 1 0 3.8 0a1.9 1.9 0 1 0 -3.8 0Z" transform="translate(0.8,0.6)" fill="url(#sgb)" fill-rule="evenodd" stroke="#2a5c84" stroke-width="0.55"/></svg><span class="c4">547 First Street</span><div class="av"><svg viewBox="0 0 28 28" width="28" height="28"><defs><filter id="bl6" x="-10%" y="-10%" width="120%" height="120%"><feGaussianBlur stdDeviation="0.55"/></filter></defs><rect width="28" height="28" fill="#c8a79b"/><g filter="url(#bl6)"><path d="M1.5 29 C1.5 18.5 6 15.2 9.5 14.6 L18.5 14.6 C22 15.2 27 18.5 27 29Z" fill="#14110f"/><path d="M9.2 16.5 C10 12.5 18 12.5 18.8 16.5 L17 19.5 L11 19.5Z" fill="#1d1917"/><ellipse cx="13.8" cy="8.6" rx="3.5" ry="4.5" fill="#c49274"/><path d="M10.2 8.2 C9.6 3.6 12 2.4 14.2 2.5 C16.8 2.6 18.2 4.6 17.5 8.3 C16.8 5.8 12.6 5.0 10.2 8.2Z" fill="#3b2619"/><rect x="13.3" y="21.8" width="1.1" height="1.6" fill="#9cc6c0"/></g></svg></div><div class="sq" style="left:532px"><svg viewBox="0 0 16 16" fill="#555"><path fill-rule="evenodd" d="M4 2a2 2 0 0 1 2-2h8a2 2 0 0 1 2 2v8a2 2 0 0 1-2 2H6a2 2 0 0 1-2-2zm2-1a1 1 0 0 0-1 1v8a1 1 0 0 0 1 1h8a1 1 0 0 0 1-1V2a1 1 0 0 0-1-1zM2 5a1 1 0 0 0-1 1v8a1 1 0 0 0 1 1h8a1 1 0 0 0 1-1v-1h1v1a2 2 0 0 1-2 2H2a2 2 0 0 1-2-2V6a2 2 0 0 1 2-2h1v1z"></path></svg></div><div class="sq" style="left:570px"><svg viewBox="0 0 16 16" fill="#555"><path d="M5.5 5.5A.5.5 0 0 1 6 6v6a.5.5 0 0 1-1 0V6a.5.5 0 0 1 .5-.5m2.5 0a.5.5 0 0 1 .5.5v6a.5.5 0 0 1-1 0V6a.5.5 0 0 1 .5-.5m3 .5a.5.5 0 0 0-1 0v6a.5.5 0 0 0 1 0z"></path><path d="M14.5 3a1 1 0 0 1-1 1H13v9a2 2 0 0 1-2 2H5a2 2 0 0 1-2-2V4h-.5a1 1 0 0 1-1-1V2a1 1 0 0 1 1-1H6a1 1 0 0 1 1-1h2a1 1 0 0 1 1 1h3.5a1 1 0 0 1 1 1zM4.118 4 4 4.059V13a1 1 0 0 0 1 1h6a1 1 0 0 0 1-1V4.059L11.882 4zM2.5 3h11V2h-11z"></path></svg></div></div>
<div class="row" style="top:399px"><span class="c1">7</span><span class="c2">Alexander</span><span class="c3">Jones</span><svg class="pin" viewBox="0 0 13 19"><defs><linearGradient id="sgy" x1="0" y1="0" x2="0" y2="1"><stop offset="0" stop-color="#fbea5a"/><stop offset="0.5" stop-color="#f0d020"/><stop offset="1" stop-color="#cfa80e"/></linearGradient></defs><path d="M5.70 17.50 C4.80 14.70 0 9.80 0 5.70 A5.70 5.70 0 1 1 11.40 5.70 C11.40 9.80 6.60 14.70 5.70 17.50ZM3.80 5.60a1.9 1.9 0 1 0 3.8 0a1.9 1.9 0 1 0 -3.8 0Z" transform="translate(0.8,0.6)" fill="url(#sgy)" fill-rule="evenodd" stroke="#b08c0a" stroke-width="0.55"/></svg><span class="c4">664 Maple Street</span><div class="av"><svg viewBox="0 0 28 28" width="28" height="28"><defs><filter id="bl7" x="-10%" y="-10%" width="120%" height="120%"><feGaussianBlur stdDeviation="0.55"/></filter></defs><rect width="28" height="28" fill="#a9aaa6"/><g filter="url(#bl7)"><rect x="-1" y="-1" width="7" height="30" fill="#333a42"/><rect x="5.5" y="-1" width="3" height="30" fill="#6d747a"/><rect x="19" y="-1" width="10" height="13" fill="#dedbd4"/><rect x="21" y="11" width="8" height="5" fill="#8a8f86"/><rect x="23" y="13" width="4" height="2" fill="#b5524a"/><path d="M3 29 C4 21 8 19 13 18.2 C20 18.2 26 20.5 27.5 29Z" fill="#22262e"/><path d="M9.5 19.6 L12.5 27 L15 19.2Z" fill="#c3cad6"/><ellipse cx="14.6" cy="11" rx="4.6" ry="5.8" fill="#c99c80"/><path d="M9.9 9.8 C9.2 4.4 12.4 2.8 15 3 C18.4 3.2 20 5.8 19.3 9.8 C18 7 13.4 6 9.9 9.8Z" fill="#36271d"/><path d="M10.2 12 C10.6 18 18.6 18 19.1 12 C18 15 11.6 15 10.2 12Z" fill="#4a3628"/><path d="M12.6 13.6 q2 1.4 4 0" stroke="#f1e6dc" stroke-width="0.8" fill="none"/></g></svg></div><div class="sq" style="left:532px"><svg viewBox="0 0 16 16" fill="#555"><path fill-rule="evenodd" d="M4 2a2 2 0 0 1 2-2h8a2 2 0 0 1 2 2v8a2 2 0 0 1-2 2H6a2 2 0 0 1-2-2zm2-1a1 1 0 0 0-1 1v8a1 1 0 0 0 1 1h8a1 1 0 0 0 1-1V2a1 1 0 0 0-1-1zM2 5a1 1 0 0 0-1 1v8a1 1 0 0 0 1 1h8a1 1 0 0 0 1-1v-1h1v1a2 2 0 0 1-2 2H2a2 2 0 0 1-2-2V6a2 2 0 0 1 2-2h1v1z"></path></svg></div><div class="sq" style="left:570px"><svg viewBox="0 0 16 16" fill="#555"><path d="M5.5 5.5A.5.5 0 0 1 6 6v6a.5.5 0 0 1-1 0V6a.5.5 0 0 1 .5-.5m2.5 0a.5.5 0 0 1 .5.5v6a.5.5 0 0 1-1 0V6a.5.5 0 0 1 .5-.5m3 .5a.5.5 0 0 0-1 0v6a.5.5 0 0 0 1 0z"></path><path d="M14.5 3a1 1 0 0 1-1 1H13v9a2 2 0 0 1-2 2H5a2 2 0 0 1-2-2V4h-.5a1 1 0 0 1-1-1V2a1 1 0 0 1 1-1H6a1 1 0 0 1 1-1h2a1 1 0 0 1 1 1h3.5a1 1 0 0 1 1 1zM4.118 4 4 4.059V13a1 1 0 0 0 1 1h6a1 1 0 0 0 1-1V4.059L11.882 4zM2.5 3h11V2h-11z"></path></svg></div></div>
<div class="row" style="top:448px"><span class="c1">8</span><span class="c2">Ava</span><span class="c3">Taylor</span><svg class="pin" viewBox="0 0 13 19"><defs><linearGradient id="sgo" x1="0" y1="0" x2="0" y2="1"><stop offset="0" stop-color="#f9cf50"/><stop offset="0.5" stop-color="#eda52c"/><stop offset="1" stop-color="#d07f16"/></linearGradient></defs><path d="M5.70 17.50 C4.80 14.70 0 9.80 0 5.70 A5.70 5.70 0 1 1 11.40 5.70 C11.40 9.80 6.60 14.70 5.70 17.50ZM3.80 5.60a1.9 1.9 0 1 0 3.8 0a1.9 1.9 0 1 0 -3.8 0Z" transform="translate(0.8,0.6)" fill="url(#sgo)" fill-rule="evenodd" stroke="#b26c10" stroke-width="0.55"/></svg><span class="c4">1197 First Street</span><div class="av"><svg viewBox="0 0 28 28" width="28" height="28"><defs><filter id="bl8" x="-10%" y="-10%" width="120%" height="120%"><feGaussianBlur stdDeviation="0.55"/></filter><radialGradient id="dg8" cx="0.62" cy="0.12" r="0.75"><stop offset="0" stop-color="#ece79a"/><stop offset="0.45" stop-color="#a9a445"/><stop offset="1" stop-color="#465426"/></radialGradient></defs><rect width="28" height="28" fill="url(#dg8)"/><g filter="url(#bl8)"><rect x="23" y="-1" width="3.4" height="24" fill="#4a3c1a"/><rect x="-1" y="19" width="30" height="3.5" fill="#b9b27a" opacity="0.75"/><rect x="-1" y="22" width="30" height="7" fill="#5f7a2a"/><path d="M1.5 29 C2.5 23 7 21 13.6 20.4 C20.5 21 25.5 23 26.5 29Z" fill="#262b33"/><path d="M11.4 21 L13.6 25.5 L15.8 21Z" fill="#8d949c"/><ellipse cx="13.7" cy="13" rx="4.7" ry="6" fill="#d3a184"/><path d="M8.7 12 C8 6 11.4 4 14.4 4.2 C18.2 4.4 20.2 7.2 19 12.2 C17.6 8.6 12.6 7.4 8.7 12Z" fill="#6b4428"/><path d="M9.3 14.2 C9.8 20.6 17.8 20.6 18.3 14.2 C17 17.4 10.8 17.4 9.3 14.2Z" fill="#8a5334"/><path d="M11.8 15.6 q2 1.3 4 0" stroke="#f3e9e0" stroke-width="0.8" fill="none"/></g></svg></div><div class="sq" style="left:532px"><svg viewBox="0 0 16 16" fill="#555"><path fill-rule="evenodd" d="M4 2a2 2 0 0 1 2-2h8a2 2 0 0 1 2 2v8a2 2 0 0 1-2 2H6a2 2 0 0 1-2-2zm2-1a1 1 0 0 0-1 1v8a1 1 0 0 0 1 1h8a1 1 0 0 0 1-1V2a1 1 0 0 0-1-1zM2 5a1 1 0 0 0-1 1v8a1 1 0 0 0 1 1h8a1 1 0 0 0 1-1v-1h1v1a2 2 0 0 1-2 2H2a2 2 0 0 1-2-2V6a2 2 0 0 1 2-2h1v1z"></path></svg></div><div class="sq" style="left:570px"><svg viewBox="0 0 16 16" fill="#555"><path d="M5.5 5.5A.5.5 0 0 1 6 6v6a.5.5 0 0 1-1 0V6a.5.5 0 0 1 .5-.5m2.5 0a.5.5 0 0 1 .5.5v6a.5.5 0 0 1-1 0V6a.5.5 0 0 1 .5-.5m3 .5a.5.5 0 0 0-1 0v6a.5.5 0 0 0 1 0z"></path><path d="M14.5 3a1 1 0 0 1-1 1H13v9a2 2 0 0 1-2 2H5a2 2 0 0 1-2-2V4h-.5a1 1 0 0 1-1-1V2a1 1 0 0 1 1-1H6a1 1 0 0 1 1-1h2a1 1 0 0 1 1 1h3.5a1 1 0 0 1 1 1zM4.118 4 4 4.059V13a1 1 0 0 0 1 1h6a1 1 0 0 0 1-1V4.059L11.882 4zM2.5 3h11V2h-11z"></path></svg></div></div>
<div class="row" style="top:497px"><span class="c1">9</span><span class="c2">Ethan</span><span class="c3">Martinez</span><svg class="pin" viewBox="0 0 13 19"><defs><linearGradient id="sgo" x1="0" y1="0" x2="0" y2="1"><stop offset="0" stop-color="#f9cf50"/><stop offset="0.5" stop-color="#eda52c"/><stop offset="1" stop-color="#d07f16"/></linearGradient></defs><path d="M5.70 17.50 C4.80 14.70 0 9.80 0 5.70 A5.70 5.70 0 1 1 11.40 5.70 C11.40 9.80 6.60 14.70 5.70 17.50ZM3.80 5.60a1.9 1.9 0 1 0 3.8 0a1.9 1.9 0 1 0 -3.8 0Z" transform="translate(0.8,0.6)" fill="url(#sgo)" fill-rule="evenodd" stroke="#b26c10" stroke-width="0.55"/></svg><span class="c4">466 Pine Street</span><div class="av"><svg viewBox="0 0 28 28" width="28" height="28"><defs><filter id="bl9" x="-10%" y="-10%" width="120%" height="120%"><feGaussianBlur stdDeviation="0.55"/></filter><radialGradient id="dg9" cx="0.62" cy="0.12" r="0.75"><stop offset="0" stop-color="#ece79a"/><stop offset="0.45" stop-color="#a9a445"/><stop offset="1" stop-color="#465426"/></radialGradient></defs><rect width="28" height="28" fill="url(#dg9)"/><g filter="url(#bl9)"><rect x="23" y="-1" width="3.4" height="24" fill="#4a3c1a"/><rect x="-1" y="19" width="30" height="3.5" fill="#b9b27a" opacity="0.75"/><rect x="-1" y="22" width="30" height="7" fill="#5f7a2a"/><path d="M1.5 29 C2.5 23 7 21 13.6 20.4 C20.5 21 25.5 23 26.5 29Z" fill="#262b33"/><path d="M11.4 21 L13.6 25.5 L15.8 21Z" fill="#8d949c"/><ellipse cx="13.7" cy="13" rx="4.7" ry="6" fill="#d3a184"/><path d="M8.7 12 C8 6 11.4 4 14.4 4.2 C18.2 4.4 20.2 7.2 19 12.2 C17.6 8.6 12.6 7.4 8.7 12Z" fill="#6b4428"/><path d="M9.3 14.2 C9.8 20.6 17.8 20.6 18.3 14.2 C17 17.4 10.8 17.4 9.3 14.2Z" fill="#8a5334"/><path d="M11.8 15.6 q2 1.3 4 0" stroke="#f3e9e0" stroke-width="0.8" fill="none"/></g></svg></div><div class="sq" style="left:532px"><svg viewBox="0 0 16 16" fill="#555"><path fill-rule="evenodd" d="M4 2a2 2 0 0 1 2-2h8a2 2 0 0 1 2 2v8a2 2 0 0 1-2 2H6a2 2 0 0 1-2-2zm2-1a1 1 0 0 0-1 1v8a1 1 0 0 0 1 1h8a1 1 0 0 0 1-1V2a1 1 0 0 0-1-1zM2 5a1 1 0 0 0-1 1v8a1 1 0 0 0 1 1h8a1 1 0 0 0 1-1v-1h1v1a2 2 0 0 1-2 2H2a2 2 0 0 1-2-2V6a2 2 0 0 1 2-2h1v1z"></path></svg></div><div class="sq" style="left:570px"><svg viewBox="0 0 16 16" fill="#555"><path d="M5.5 5.5A.5.5 0 0 1 6 6v6a.5.5 0 0 1-1 0V6a.5.5 0 0 1 .5-.5m2.5 0a.5.5 0 0 1 .5.5v6a.5.5 0 0 1-1 0V6a.5.5 0 0 1 .5-.5m3 .5a.5.5 0 0 0-1 0v6a.5.5 0 0 0 1 0z"></path><path d="M14.5 3a1 1 0 0 1-1 1H13v9a2 2 0 0 1-2 2H5a2 2 0 0 1-2-2V4h-.5a1 1 0 0 1-1-1V2a1 1 0 0 1 1-1H6a1 1 0 0 1 1-1h2a1 1 0 0 1 1 1h3.5a1 1 0 0 1 1 1zM4.118 4 4 4.059V13a1 1 0 0 0 1 1h6a1 1 0 0 0 1-1V4.059L11.882 4zM2.5 3h11V2h-11z"></path></svg></div></div>
<div class="row" style="top:546px"><span class="c1">10</span><span class="c2">Isabella</span><span class="c3">Anderson</span><svg class="pin" viewBox="0 0 13 19"><defs><linearGradient id="sgg" x1="0" y1="0" x2="0" y2="1"><stop offset="0" stop-color="#b4b4b4"/><stop offset="0.5" stop-color="#8c8c8c"/><stop offset="1" stop-color="#6a6a6a"/></linearGradient></defs><path d="M5.70 17.50 C4.80 14.70 0 9.80 0 5.70 A5.70 5.70 0 1 1 11.40 5.70 C11.40 9.80 6.60 14.70 5.70 17.50ZM3.80 5.60a1.9 1.9 0 1 0 3.8 0a1.9 1.9 0 1 0 -3.8 0Z" transform="translate(0.8,0.6)" fill="url(#sgg)" fill-rule="evenodd" stroke="#585858" stroke-width="0.55"/></svg><span class="c4">1964 Oak Street</span><div class="av"><svg viewBox="0 0 28 28" width="28" height="28"><defs><filter id="bl10" x="-10%" y="-10%" width="120%" height="120%"><feGaussianBlur stdDeviation="0.55"/></filter></defs><rect width="28" height="28" fill="#c8a79b"/><g filter="url(#bl10)"><path d="M1.5 29 C1.5 18.5 6 15.2 9.5 14.6 L18.5 14.6 C22 15.2 27 18.5 27 29Z" fill="#14110f"/><path d="M9.2 16.5 C10 12.5 18 12.5 18.8 16.5 L17 19.5 L11 19.5Z" fill="#1d1917"/><ellipse cx="13.8" cy="8.6" rx="3.5" ry="4.5" fill="#c49274"/><path d="M10.2 8.2 C9.6 3.6 12 2.4 14.2 2.5 C16.8 2.6 18.2 4.6 17.5 8.3 C16.8 5.8 12.6 5.0 10.2 8.2Z" fill="#3b2619"/><rect x="13.3" y="21.8" width="1.1" height="1.6" fill="#9cc6c0"/></g></svg></div><div class="sq" style="left:532px"><svg viewBox="0 0 16 16" fill="#555"><path fill-rule="evenodd" d="M4 2a2 2 0 0 1 2-2h8a2 2 0 0 1 2 2v8a2 2 0 0 1-2 2H6a2 2 0 0 1-2-2zm2-1a1 1 0 0 0-1 1v8a1 1 0 0 0 1 1h8a1 1 0 0 0 1-1V2a1 1 0 0 0-1-1zM2 5a1 1 0 0 0-1 1v8a1 1 0 0 0 1 1h8a1 1 0 0 0 1-1v-1h1v1a2 2 0 0 1-2 2H2a2 2 0 0 1-2-2V6a2 2 0 0 1 2-2h1v1z"></path></svg></div><div class="sq" style="left:570px"><svg viewBox="0 0 16 16" fill="#555"><path d="M5.5 5.5A.5.5 0 0 1 6 6v6a.5.5 0 0 1-1 0V6a.5.5 0 0 1 .5-.5m2.5 0a.5.5 0 0 1 .5.5v6a.5.5 0 0 1-1 0V6a.5.5 0 0 1 .5-.5m3 .5a.5.5 0 0 0-1 0v6a.5.5 0 0 0 1 0z"></path><path d="M14.5 3a1 1 0 0 1-1 1H13v9a2 2 0 0 1-2 2H5a2 2 0 0 1-2-2V4h-.5a1 1 0 0 1-1-1V2a1 1 0 0 1 1-1H6a1 1 0 0 1 1-1h2a1 1 0 0 1 1 1h3.5a1 1 0 0 1 1 1zM4.118 4 4 4.059V13a1 1 0 0 0 1 1h6a1 1 0 0 0 1-1V4.059L11.882 4zM2.5 3h11V2h-11z"></path></svg></div></div>
<div class="row" style="top:595px"><span class="c1">11</span><span class="c2">Liam</span><span class="c3">Garcia</span><svg class="pin" viewBox="0 0 13 19"><defs><linearGradient id="sgb" x1="0" y1="0" x2="0" y2="1"><stop offset="0" stop-color="#78b0dc"/><stop offset="0.5" stop-color="#4a8cc0"/><stop offset="1" stop-color="#33719f"/></linearGradient></defs><path d="M5.70 17.50 C4.80 14.70 0 9.80 0 5.70 A5.70 5.70 0 1 1 11.40 5.70 C11.40 9.80 6.60 14.70 5.70 17.50ZM3.80 5.60a1.9 1.9 0 1 0 3.8 0a1.9 1.9 0 1 0 -3.8 0Z" transform="translate(0.8,0.6)" fill="url(#sgb)" fill-rule="evenodd" stroke="#2a5c84" stroke-width="0.55"/></svg><span class="c4">576 Fifth Street</span><div class="av"><svg viewBox="0 0 28 28" width="28" height="28"><defs><filter id="bl11" x="-10%" y="-10%" width="120%" height="120%"><feGaussianBlur stdDeviation="0.55"/></filter></defs><rect width="28" height="28" fill="#55554b"/><g filter="url(#bl11)"><rect x="-1" y="-1" width="30" height="10" fill="#67675b"/><rect x="-1" y="18" width="30" height="11" fill="#3c3a33"/><path d="M3.5 29 C4 21.5 8 19.6 13.5 19 C19.5 19.3 24.5 21.5 25 29Z" fill="#0f0f10"/><rect x="11.2" y="16" width="4.8" height="4.5" fill="#111112"/><circle cx="13.8" cy="10.6" r="6.6" fill="#1c1613"/><circle cx="9" cy="12.6" r="3" fill="#1c1613"/><circle cx="18.6" cy="12.6" r="3" fill="#1c1613"/><ellipse cx="13.6" cy="12.2" rx="3.1" ry="4.2" fill="#c39a80"/><path d="M10.4 10.8 C10.6 7.6 16.8 7.6 17 10.8 C15 9.4 12.4 9.4 10.4 10.8Z" fill="#1c1613"/><rect x="-1" y="23" width="5" height="6" fill="#6d3a22"/></g></svg></div><div class="sq" style="left:532px"><svg viewBox="0 0 16 16" fill="#555"><path fill-rule="evenodd" d="M4 2a2 2 0 0 1 2-2h8a2 2 0 0 1 2 2v8a2 2 0 0 1-2 2H6a2 2 0 0 1-2-2zm2-1a1 1 0 0 0-1 1v8a1 1 0 0 0 1 1h8a1 1 0 0 0 1-1V2a1 1 0 0 0-1-1zM2 5a1 1 0 0 0-1 1v8a1 1 0 0 0 1 1h8a1 1 0 0 0 1-1v-1h1v1a2 2 0 0 1-2 2H2a2 2 0 0 1-2-2V6a2 2 0 0 1 2-2h1v1z"></path></svg></div><div class="sq" style="left:570px"><svg viewBox="0 0 16 16" fill="#555"><path d="M5.5 5.5A.5.5 0 0 1 6 6v6a.5.5 0 0 1-1 0V6a.5.5 0 0 1 .5-.5m2.5 0a.5.5 0 0 1 .5.5v6a.5.5 0 0 1-1 0V6a.5.5 0 0 1 .5-.5m3 .5a.5.5 0 0 0-1 0v6a.5.5 0 0 0 1 0z"></path><path d="M14.5 3a1 1 0 0 1-1 1H13v9a2 2 0 0 1-2 2H5a2 2 0 0 1-2-2V4h-.5a1 1 0 0 1-1-1V2a1 1 0 0 1 1-1H6a1 1 0 0 1 1-1h2a1 1 0 0 1 1 1h3.5a1 1 0 0 1 1 1zM4.118 4 4 4.059V13a1 1 0 0 0 1 1h6a1 1 0 0 0 1-1V4.059L11.882 4zM2.5 3h11V2h-11z"></path></svg></div></div>
<div class="row" style="top:644px"><span class="c1">12</span><span class="c2">Mia</span><span class="c3">Rodriguez</span><svg class="pin" viewBox="0 0 13 19"><defs><linearGradient id="sgy" x1="0" y1="0" x2="0" y2="1"><stop offset="0" stop-color="#fbea5a"/><stop offset="0.5" stop-color="#f0d020"/><stop offset="1" stop-color="#cfa80e"/></linearGradient></defs><path d="M5.70 17.50 C4.80 14.70 0 9.80 0 5.70 A5.70 5.70 0 1 1 11.40 5.70 C11.40 9.80 6.60 14.70 5.70 17.50ZM3.80 5.60a1.9 1.9 0 1 0 3.8 0a1.9 1.9 0 1 0 -3.8 0Z" transform="translate(0.8,0.6)" fill="url(#sgy)" fill-rule="evenodd" stroke="#b08c0a" stroke-width="0.55"/></svg><span class="c4">1627 Sixth Street</span><div class="av"><svg viewBox="0 0 28 28" width="28" height="28"><defs><filter id="bl12" x="-10%" y="-10%" width="120%" height="120%"><feGaussianBlur stdDeviation="0.55"/></filter></defs><rect width="28" height="28" fill="#a9aaa6"/><g filter="url(#bl12)"><rect x="-1" y="-1" width="7" height="30" fill="#333a42"/><rect x="5.5" y="-1" width="3" height="30" fill="#6d747a"/><rect x="19" y="-1" width="10" height="13" fill="#dedbd4"/><rect x="21" y="11" width="8" height="5" fill="#8a8f86"/><rect x="23" y="13" width="4" height="2" fill="#b5524a"/><path d="M3 29 C4 21 8 19 13 18.2 C20 18.2 26 20.5 27.5 29Z" fill="#22262e"/><path d="M9.5 19.6 L12.5 27 L15 19.2Z" fill="#c3cad6"/><ellipse cx="14.6" cy="11" rx="4.6" ry="5.8" fill="#c99c80"/><path d="M9.9 9.8 C9.2 4.4 12.4 2.8 15 3 C18.4 3.2 20 5.8 19.3 9.8 C18 7 13.4 6 9.9 9.8Z" fill="#36271d"/><path d="M10.2 12 C10.6 18 18.6 18 19.1 12 C18 15 11.6 15 10.2 12Z" fill="#4a3628"/><path d="M12.6 13.6 q2 1.4 4 0" stroke="#f1e6dc" stroke-width="0.8" fill="none"/></g></svg></div><div class="sq" style="left:532px"><svg viewBox="0 0 16 16" fill="#555"><path fill-rule="evenodd" d="M4 2a2 2 0 0 1 2-2h8a2 2 0 0 1 2 2v8a2 2 0 0 1-2 2H6a2 2 0 0 1-2-2zm2-1a1 1 0 0 0-1 1v8a1 1 0 0 0 1 1h8a1 1 0 0 0 1-1V2a1 1 0 0 0-1-1zM2 5a1 1 0 0 0-1 1v8a1 1 0 0 0 1 1h8a1 1 0 0 0 1-1v-1h1v1a2 2 0 0 1-2 2H2a2 2 0 0 1-2-2V6a2 2 0 0 1 2-2h1v1z"></path></svg></div><div class="sq" style="left:570px"><svg viewBox="0 0 16 16" fill="#555"><path d="M5.5 5.5A.5.5 0 0 1 6 6v6a.5.5 0 0 1-1 0V6a.5.5 0 0 1 .5-.5m2.5 0a.5.5 0 0 1 .5.5v6a.5.5 0 0 1-1 0V6a.5.5 0 0 1 .5-.5m3 .5a.5.5 0 0 0-1 0v6a.5.5 0 0 0 1 0z"></path><path d="M14.5 3a1 1 0 0 1-1 1H13v9a2 2 0 0 1-2 2H5a2 2 0 0 1-2-2V4h-.5a1 1 0 0 1-1-1V2a1 1 0 0 1 1-1H6a1 1 0 0 1 1-1h2a1 1 0 0 1 1 1h3.5a1 1 0 0 1 1 1zM4.118 4 4 4.059V13a1 1 0 0 0 1 1h6a1 1 0 0 0 1-1V4.059L11.882 4zM2.5 3h11V2h-11z"></path></svg></div></div>
</div>
<div class="abs" style="left:1194px;top:648px;width:48px;height:48px;border-radius:24px;background:#333;box-shadow:0 2px 10px rgba(0,0,0,.22)"></div>
<svg class="abs" style="left:1207.5px;top:660px;width:20.5px;height:24px" viewBox="0 0 20.5 24"><path d="M3.5 0h13.5a3.5 3.5 0 0 1 3.5 3.5v20.3l-4.6-3.8H3.5a3.5 3.5 0 0 1-3.5-3.5V3.5a3.5 3.5 0 0 1 3.5-3.5z" fill="#fff"/></svg>
</body></html>
